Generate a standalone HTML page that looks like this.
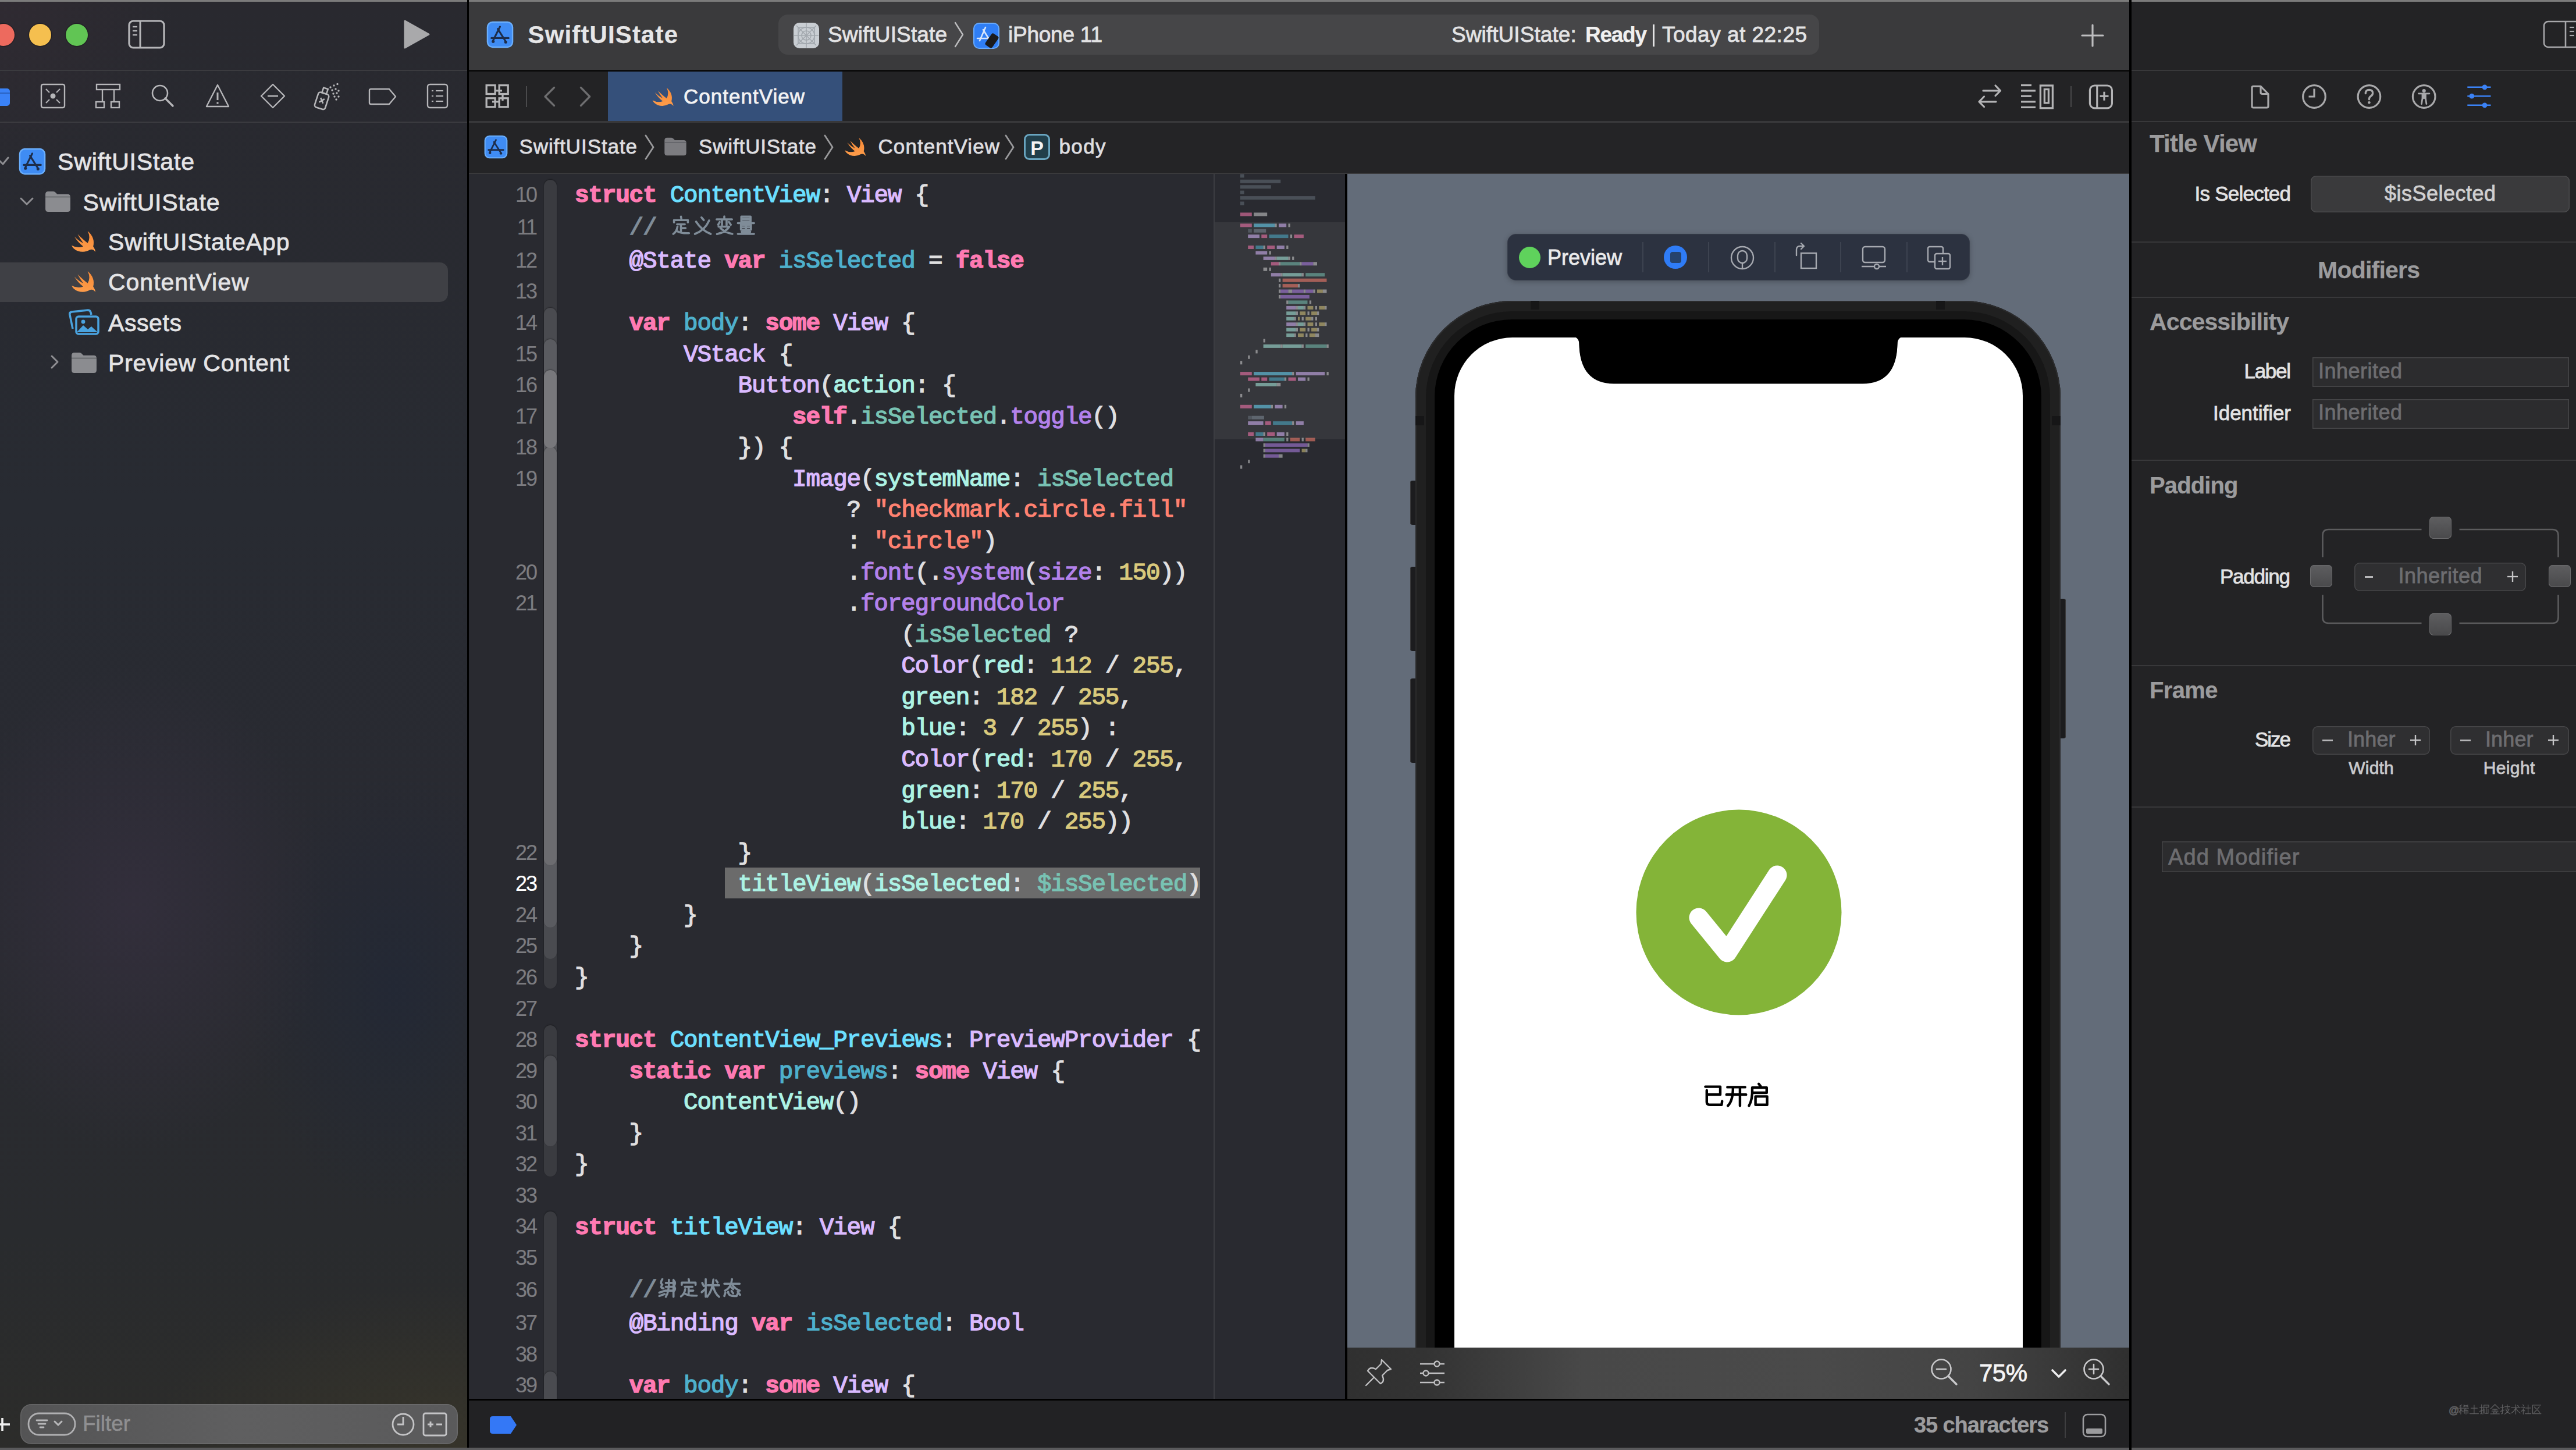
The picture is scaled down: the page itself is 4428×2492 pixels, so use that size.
<!DOCTYPE html><html><head><meta charset="utf-8"><style>html,body{margin:0;padding:0;}body{width:4428px;height:2492px;position:relative;overflow:hidden;background:#232325;font-family:"Liberation Sans",sans-serif;}</style></head><body>
<div style="position:absolute;left:0px;top:0px;width:803px;height:2492px;background:radial-gradient(ellipse 330px 420px at 230px 1560px, rgba(58,50,68,0.55), rgba(58,50,68,0) 100%), radial-gradient(ellipse 260px 380px at 680px 1700px, rgba(28,38,58,0.45), rgba(28,38,58,0) 100%), radial-gradient(ellipse 500px 260px at 760px 2470px, rgba(62,58,42,0.55), rgba(62,58,42,0) 100%), radial-gradient(ellipse 300px 300px at 0px 0px, rgba(60,45,55,0.35), rgba(60,45,55,0) 100%), linear-gradient(180deg,#29292f 0%,#282b32 35%,#292a31 60%,#292b2e 85%,#2c2c2a 100%);"></div>
<div style="position:absolute;left:0px;top:0px;width:4428px;height:3px;background:#7b7b7b;"></div>
<div style="position:absolute;left:0px;top:120px;width:803px;height:2px;background:#3b3b3f;"></div>
<div style="position:absolute;left:0px;top:209px;width:803px;height:2px;background:#3b3b3f;"></div>
<div style="position:absolute;left:0px;top:451px;width:770px;height:68px;background:#3f4045;border-radius:0 14px 14px 0;"></div>
<div style="position:absolute;left:803px;top:0px;width:3px;height:2492px;background:#000;"></div>
<div style="position:absolute;left:806px;top:3px;width:2854px;height:117px;background:#3a3a3c;"></div>
<div style="position:absolute;left:806px;top:120px;width:2854px;height:3px;background:#0b0b0b;"></div>
<div style="position:absolute;left:806px;top:123px;width:2854px;height:85px;background:#232325;"></div>
<div style="position:absolute;left:1045px;top:123px;width:403px;height:85px;background:#35507a;"></div>
<div style="position:absolute;left:806px;top:208px;width:2854px;height:3px;background:#38383a;"></div>
<div style="position:absolute;left:806px;top:211px;width:2854px;height:86px;background:#242426;"></div>
<div style="position:absolute;left:806px;top:297px;width:2854px;height:2px;background:#3a3a3c;"></div>
<div style="position:absolute;left:806px;top:299px;width:1506px;height:2105px;background:#292a30;"></div>
<div style="position:absolute;left:2086px;top:299px;width:2px;height:2105px;background:#3c3d42;"></div>
<div style="position:absolute;left:2088px;top:382px;width:224px;height:373px;background:#36373c;"></div>
<div style="position:absolute;left:2312px;top:299px;width:4px;height:2105px;background:#000;"></div>
<div style="position:absolute;left:2316px;top:299px;width:1344px;height:2017px;background:#636c79;"></div>
<div style="position:absolute;left:2316px;top:2316px;width:1344px;height:88px;background:linear-gradient(90deg,#303030 0%,#333 10%,#484848 30%,#4a4a4a 60%,#444 80%,#2f2f2f 100%);"></div>
<div style="position:absolute;left:806px;top:2404px;width:2854px;height:3px;background:#000;"></div>
<div style="position:absolute;left:806px;top:2407px;width:2854px;height:81px;background:#222224;"></div>
<div style="position:absolute;left:0px;top:2488px;width:4428px;height:4px;background:#5a5a5c;"></div>
<div style="position:absolute;left:3660px;top:0px;width:4px;height:2492px;background:#000;"></div>
<div style="position:absolute;left:3664px;top:3px;width:764px;height:2485px;background:#232325;"></div>
<div style="position:absolute;left:3664px;top:120px;width:764px;height:2px;background:#38383a;"></div>
<div style="position:absolute;left:3664px;top:208px;width:764px;height:2px;background:#38383a;"></div>
<div style="position:absolute;left:935px;top:309px;width:22px;height:1390px;background:#3a3b40;border-radius:11px;box-shadow:0 -1px 2px rgba(0,0,0,0.35);"></div>
<div style="position:absolute;left:935px;top:529px;width:22px;height:1119px;background:#4a4b50;border-radius:11px;box-shadow:0 -1px 2px rgba(0,0,0,0.35);"></div>
<div style="position:absolute;left:935px;top:583px;width:22px;height:1011px;background:#5a5b60;border-radius:11px;box-shadow:0 -1px 2px rgba(0,0,0,0.35);"></div>
<div style="position:absolute;left:935px;top:768px;width:22px;height:719px;background:#6c6c70;border-radius:11px;box-shadow:0 -1px 2px rgba(0,0,0,0.35);"></div>
<div style="position:absolute;left:935px;top:636px;width:22px;height:134px;background:#78787c;border-radius:11px;box-shadow:0 -1px 2px rgba(0,0,0,0.35);"></div>
<div style="position:absolute;left:935px;top:1762px;width:22px;height:260px;background:#3a3b40;border-radius:11px;box-shadow:0 -1px 2px rgba(0,0,0,0.35);"></div>
<div style="position:absolute;left:935px;top:1814px;width:22px;height:156px;background:#4a4b50;border-radius:11px;box-shadow:0 -1px 2px rgba(0,0,0,0.35);"></div>
<div style="position:absolute;left:935px;top:2082px;width:22px;height:322px;background:#3a3b40;border-radius:11px;box-shadow:0 -1px 2px rgba(0,0,0,0.35);"></div>
<div style="position:absolute;left:935px;top:2357px;width:22px;height:73px;background:#4a4b50;border-radius:11px;box-shadow:0 -1px 2px rgba(0,0,0,0.35);"></div>
<div style="position:absolute;left:806px;top:2404px;width:2854px;height:3px;background:#000;"></div>
<div style="position:absolute;left:806px;top:2407px;width:1510px;height:33px;background:#222224;"></div>
<div style="position:absolute;left:1245.5px;top:1491px;width:817.5px;height:52.5px;background:#6b6b6b;"></div>
<div style="position:absolute;left:885.96px;top:316.52px;font-family:'Liberation Sans', sans-serif;font-size:36px;line-height:36px;color:#7c7c80;white-space:pre;letter-spacing:-2.000px;-webkit-text-stroke:0.2px #7c7c80;">10</div>
<div style="position:absolute;left:988.0px;top:315.59px;font-family:'Liberation Mono', monospace;font-size:41px;line-height:41px;white-space:pre;letter-spacing:-1.224px;color:#dfdfe0;-webkit-text-stroke:1.4px currentColor"><span style="color:#ff7ab2;font-weight:bold">struct</span><span style="color:#dfdfe0"> </span><span style="color:#6bdfff">ContentView</span><span style="color:#dfdfe0">: </span><span style="color:#dabaff">View</span><span style="color:#dfdfe0"> {</span></div>
<div style="position:absolute;left:888.63px;top:372.52px;font-family:'Liberation Sans', sans-serif;font-size:36px;line-height:36px;color:#7c7c80;white-space:pre;letter-spacing:-2.000px;-webkit-text-stroke:0.2px #7c7c80;">11</div>
<div style="position:absolute;left:988.0px;top:371.59px;font-family:'Liberation Mono', monospace;font-size:41px;line-height:41px;white-space:pre;letter-spacing:-1.224px;color:#dfdfe0;-webkit-text-stroke:1.4px currentColor"><span style="color:#dfdfe0">    </span><span style="color:#7f8c98">// </span></div>
<svg style="position:absolute;left:1153.7px;top:371.0px;overflow:visible" width="149.0" height="33" viewBox="0 0 451.5 100"><g fill="none" stroke="#7f8c98" stroke-width="11" stroke-linecap="round" stroke-linejoin="round"><path transform="translate(0.0,0)" d="M50,4 L52,14 M14,34 L14,22 L86,22 L86,34 M30,44 L70,44 M50,44 L50,86 M50,64 L74,64 M32,56 Q28,82 10,94 M30,80 Q52,92 92,90"/><path transform="translate(112.9,0)" d="M44,8 L56,22 M84,24 Q62,74 10,94 M16,30 Q46,76 92,94"/><path transform="translate(225.8,0)" d="M50,3 L50,13 M10,18 L90,18 M38,26 L38,48 M62,26 L62,48 M26,32 L18,46 M74,32 L84,46 M20,56 L76,56 Q60,84 12,95 M30,64 Q56,88 92,94"/><path transform="translate(338.6,0)" d="M26,4 L74,4 L74,30 L26,30 Z M26,17 L74,17 M8,38 L92,38 M24,46 L76,46 L76,72 L24,72 Z M24,59 L76,59 M50,46 L50,94 M28,83 L72,83 M8,94 L92,94"/></g></svg>
<div style="position:absolute;left:885.96px;top:429.82px;font-family:'Liberation Sans', sans-serif;font-size:36px;line-height:36px;color:#7c7c80;white-space:pre;letter-spacing:-2.000px;-webkit-text-stroke:0.2px #7c7c80;">12</div>
<div style="position:absolute;left:988.0px;top:428.89px;font-family:'Liberation Mono', monospace;font-size:41px;line-height:41px;white-space:pre;letter-spacing:-1.224px;color:#dfdfe0;-webkit-text-stroke:1.4px currentColor"><span style="color:#dfdfe0">    </span><span style="color:#dabaff">@State</span><span style="color:#dfdfe0"> </span><span style="color:#ff7ab2;font-weight:bold">var</span><span style="color:#dfdfe0"> </span><span style="color:#4eb0cc">isSelected</span><span style="color:#dfdfe0"> = </span><span style="color:#ff7ab2;font-weight:bold">false</span></div>
<div style="position:absolute;left:885.96px;top:483.39px;font-family:'Liberation Sans', sans-serif;font-size:36px;line-height:36px;color:#7c7c80;white-space:pre;letter-spacing:-2.000px;-webkit-text-stroke:0.2px #7c7c80;">13</div>
<div style="position:absolute;left:885.96px;top:536.96px;font-family:'Liberation Sans', sans-serif;font-size:36px;line-height:36px;color:#7c7c80;white-space:pre;letter-spacing:-2.000px;-webkit-text-stroke:0.2px #7c7c80;">14</div>
<div style="position:absolute;left:988.0px;top:536.03px;font-family:'Liberation Mono', monospace;font-size:41px;line-height:41px;white-space:pre;letter-spacing:-1.224px;color:#dfdfe0;-webkit-text-stroke:1.4px currentColor"><span style="color:#dfdfe0">    </span><span style="color:#ff7ab2;font-weight:bold">var</span><span style="color:#dfdfe0"> </span><span style="color:#4eb0cc">body</span><span style="color:#dfdfe0">: </span><span style="color:#ff7ab2;font-weight:bold">some</span><span style="color:#dfdfe0"> </span><span style="color:#dabaff">View</span><span style="color:#dfdfe0"> {</span></div>
<div style="position:absolute;left:885.96px;top:590.53px;font-family:'Liberation Sans', sans-serif;font-size:36px;line-height:36px;color:#7c7c80;white-space:pre;letter-spacing:-2.000px;-webkit-text-stroke:0.2px #7c7c80;">15</div>
<div style="position:absolute;left:988.0px;top:589.60px;font-family:'Liberation Mono', monospace;font-size:41px;line-height:41px;white-space:pre;letter-spacing:-1.224px;color:#dfdfe0;-webkit-text-stroke:1.4px currentColor"><span style="color:#dfdfe0">        </span><span style="color:#dabaff">VStack</span><span style="color:#dfdfe0"> {</span></div>
<div style="position:absolute;left:885.96px;top:644.10px;font-family:'Liberation Sans', sans-serif;font-size:36px;line-height:36px;color:#7c7c80;white-space:pre;letter-spacing:-2.000px;-webkit-text-stroke:0.2px #7c7c80;">16</div>
<div style="position:absolute;left:988.0px;top:643.17px;font-family:'Liberation Mono', monospace;font-size:41px;line-height:41px;white-space:pre;letter-spacing:-1.224px;color:#dfdfe0;-webkit-text-stroke:1.4px currentColor"><span style="color:#dfdfe0">            </span><span style="color:#dabaff">Button</span><span style="color:#dfdfe0">(</span><span style="color:#acf2e4">action</span><span style="color:#dfdfe0">: {</span></div>
<div style="position:absolute;left:885.96px;top:697.67px;font-family:'Liberation Sans', sans-serif;font-size:36px;line-height:36px;color:#7c7c80;white-space:pre;letter-spacing:-2.000px;-webkit-text-stroke:0.2px #7c7c80;">17</div>
<div style="position:absolute;left:988.0px;top:696.74px;font-family:'Liberation Mono', monospace;font-size:41px;line-height:41px;white-space:pre;letter-spacing:-1.224px;color:#dfdfe0;-webkit-text-stroke:1.4px currentColor"><span style="color:#dfdfe0">                </span><span style="color:#ff7ab2;font-weight:bold">self</span><span style="color:#dfdfe0">.</span><span style="color:#78c2b3">isSelected</span><span style="color:#dfdfe0">.</span><span style="color:#b281eb">toggle</span><span style="color:#dfdfe0">()</span></div>
<div style="position:absolute;left:885.96px;top:751.24px;font-family:'Liberation Sans', sans-serif;font-size:36px;line-height:36px;color:#7c7c80;white-space:pre;letter-spacing:-2.000px;-webkit-text-stroke:0.2px #7c7c80;">18</div>
<div style="position:absolute;left:988.0px;top:750.31px;font-family:'Liberation Mono', monospace;font-size:41px;line-height:41px;white-space:pre;letter-spacing:-1.224px;color:#dfdfe0;-webkit-text-stroke:1.4px currentColor"><span style="color:#dfdfe0">            }) {</span></div>
<div style="position:absolute;left:885.96px;top:804.81px;font-family:'Liberation Sans', sans-serif;font-size:36px;line-height:36px;color:#7c7c80;white-space:pre;letter-spacing:-2.000px;-webkit-text-stroke:0.2px #7c7c80;">19</div>
<div style="position:absolute;left:988.0px;top:803.88px;font-family:'Liberation Mono', monospace;font-size:41px;line-height:41px;white-space:pre;letter-spacing:-1.224px;color:#dfdfe0;-webkit-text-stroke:1.4px currentColor"><span style="color:#dfdfe0">                </span><span style="color:#dabaff">Image</span><span style="color:#dfdfe0">(</span><span style="color:#acf2e4">systemName</span><span style="color:#dfdfe0">: </span><span style="color:#78c2b3">isSelected</span></div>
<div style="position:absolute;left:988.0px;top:857.45px;font-family:'Liberation Mono', monospace;font-size:41px;line-height:41px;white-space:pre;letter-spacing:-1.224px;color:#dfdfe0;-webkit-text-stroke:1.4px currentColor"><span style="color:#dfdfe0">                    ? </span><span style="color:#ff8170">&quot;checkmark.circle.fill&quot;</span></div>
<div style="position:absolute;left:988.0px;top:911.02px;font-family:'Liberation Mono', monospace;font-size:41px;line-height:41px;white-space:pre;letter-spacing:-1.224px;color:#dfdfe0;-webkit-text-stroke:1.4px currentColor"><span style="color:#dfdfe0">                    : </span><span style="color:#ff8170">&quot;circle&quot;</span><span style="color:#dfdfe0">)</span></div>
<div style="position:absolute;left:885.96px;top:965.52px;font-family:'Liberation Sans', sans-serif;font-size:36px;line-height:36px;color:#7c7c80;white-space:pre;letter-spacing:-2.000px;-webkit-text-stroke:0.2px #7c7c80;">20</div>
<div style="position:absolute;left:988.0px;top:964.59px;font-family:'Liberation Mono', monospace;font-size:41px;line-height:41px;white-space:pre;letter-spacing:-1.224px;color:#dfdfe0;-webkit-text-stroke:1.4px currentColor"><span style="color:#dfdfe0">                    .</span><span style="color:#b281eb">font</span><span style="color:#dfdfe0">(.</span><span style="color:#b281eb">system</span><span style="color:#dfdfe0">(</span><span style="color:#b281eb">size</span><span style="color:#dfdfe0">: </span><span style="color:#d9c97c">150</span><span style="color:#dfdfe0">))</span></div>
<div style="position:absolute;left:885.96px;top:1019.09px;font-family:'Liberation Sans', sans-serif;font-size:36px;line-height:36px;color:#7c7c80;white-space:pre;letter-spacing:-2.000px;-webkit-text-stroke:0.2px #7c7c80;">21</div>
<div style="position:absolute;left:988.0px;top:1018.16px;font-family:'Liberation Mono', monospace;font-size:41px;line-height:41px;white-space:pre;letter-spacing:-1.224px;color:#dfdfe0;-webkit-text-stroke:1.4px currentColor"><span style="color:#dfdfe0">                    .</span><span style="color:#b281eb">foregroundColor</span></div>
<div style="position:absolute;left:988.0px;top:1071.73px;font-family:'Liberation Mono', monospace;font-size:41px;line-height:41px;white-space:pre;letter-spacing:-1.224px;color:#dfdfe0;-webkit-text-stroke:1.4px currentColor"><span style="color:#dfdfe0">                        (</span><span style="color:#78c2b3">isSelected</span><span style="color:#dfdfe0"> ?</span></div>
<div style="position:absolute;left:988.0px;top:1125.30px;font-family:'Liberation Mono', monospace;font-size:41px;line-height:41px;white-space:pre;letter-spacing:-1.224px;color:#dfdfe0;-webkit-text-stroke:1.4px currentColor"><span style="color:#dfdfe0">                        </span><span style="color:#dabaff">Color</span><span style="color:#dfdfe0">(</span><span style="color:#acf2e4">red</span><span style="color:#dfdfe0">: </span><span style="color:#d9c97c">112</span><span style="color:#dfdfe0"> / </span><span style="color:#d9c97c">255</span><span style="color:#dfdfe0">,</span></div>
<div style="position:absolute;left:988.0px;top:1178.87px;font-family:'Liberation Mono', monospace;font-size:41px;line-height:41px;white-space:pre;letter-spacing:-1.224px;color:#dfdfe0;-webkit-text-stroke:1.4px currentColor"><span style="color:#dfdfe0">                        </span><span style="color:#acf2e4">green</span><span style="color:#dfdfe0">: </span><span style="color:#d9c97c">182</span><span style="color:#dfdfe0"> / </span><span style="color:#d9c97c">255</span><span style="color:#dfdfe0">,</span></div>
<div style="position:absolute;left:988.0px;top:1232.44px;font-family:'Liberation Mono', monospace;font-size:41px;line-height:41px;white-space:pre;letter-spacing:-1.224px;color:#dfdfe0;-webkit-text-stroke:1.4px currentColor"><span style="color:#dfdfe0">                        </span><span style="color:#acf2e4">blue</span><span style="color:#dfdfe0">: </span><span style="color:#d9c97c">3</span><span style="color:#dfdfe0"> / </span><span style="color:#d9c97c">255</span><span style="color:#dfdfe0">) :</span></div>
<div style="position:absolute;left:988.0px;top:1286.01px;font-family:'Liberation Mono', monospace;font-size:41px;line-height:41px;white-space:pre;letter-spacing:-1.224px;color:#dfdfe0;-webkit-text-stroke:1.4px currentColor"><span style="color:#dfdfe0">                        </span><span style="color:#dabaff">Color</span><span style="color:#dfdfe0">(</span><span style="color:#acf2e4">red</span><span style="color:#dfdfe0">: </span><span style="color:#d9c97c">170</span><span style="color:#dfdfe0"> / </span><span style="color:#d9c97c">255</span><span style="color:#dfdfe0">,</span></div>
<div style="position:absolute;left:988.0px;top:1339.58px;font-family:'Liberation Mono', monospace;font-size:41px;line-height:41px;white-space:pre;letter-spacing:-1.224px;color:#dfdfe0;-webkit-text-stroke:1.4px currentColor"><span style="color:#dfdfe0">                        </span><span style="color:#acf2e4">green</span><span style="color:#dfdfe0">: </span><span style="color:#d9c97c">170</span><span style="color:#dfdfe0"> / </span><span style="color:#d9c97c">255</span><span style="color:#dfdfe0">,</span></div>
<div style="position:absolute;left:988.0px;top:1393.15px;font-family:'Liberation Mono', monospace;font-size:41px;line-height:41px;white-space:pre;letter-spacing:-1.224px;color:#dfdfe0;-webkit-text-stroke:1.4px currentColor"><span style="color:#dfdfe0">                        </span><span style="color:#acf2e4">blue</span><span style="color:#dfdfe0">: </span><span style="color:#d9c97c">170</span><span style="color:#dfdfe0"> / </span><span style="color:#d9c97c">255</span><span style="color:#dfdfe0">))</span></div>
<div style="position:absolute;left:885.96px;top:1447.65px;font-family:'Liberation Sans', sans-serif;font-size:36px;line-height:36px;color:#7c7c80;white-space:pre;letter-spacing:-2.000px;-webkit-text-stroke:0.2px #7c7c80;">22</div>
<div style="position:absolute;left:988.0px;top:1446.72px;font-family:'Liberation Mono', monospace;font-size:41px;line-height:41px;white-space:pre;letter-spacing:-1.224px;color:#dfdfe0;-webkit-text-stroke:1.4px currentColor"><span style="color:#dfdfe0">            }</span></div>
<div style="position:absolute;left:885.96px;top:1501.22px;font-family:'Liberation Sans', sans-serif;font-size:36px;line-height:36px;color:#ffffff;white-space:pre;letter-spacing:-2.000px;-webkit-text-stroke:0.2px #ffffff;">23</div>
<div style="position:absolute;left:988.0px;top:1500.29px;font-family:'Liberation Mono', monospace;font-size:41px;line-height:41px;white-space:pre;letter-spacing:-1.224px;color:#dfdfe0;-webkit-text-stroke:1.4px currentColor"><span style="color:#dfdfe0">            </span><span style="color:#acf2e4">titleView</span><span style="color:#dfdfe0">(</span><span style="color:#acf2e4">isSelected</span><span style="color:#dfdfe0">: </span><span style="color:#78c2b3">$isSelected</span><span style="color:#dfdfe0">)</span></div>
<div style="position:absolute;left:885.96px;top:1554.79px;font-family:'Liberation Sans', sans-serif;font-size:36px;line-height:36px;color:#7c7c80;white-space:pre;letter-spacing:-2.000px;-webkit-text-stroke:0.2px #7c7c80;">24</div>
<div style="position:absolute;left:988.0px;top:1553.86px;font-family:'Liberation Mono', monospace;font-size:41px;line-height:41px;white-space:pre;letter-spacing:-1.224px;color:#dfdfe0;-webkit-text-stroke:1.4px currentColor"><span style="color:#dfdfe0">        }</span></div>
<div style="position:absolute;left:885.96px;top:1608.36px;font-family:'Liberation Sans', sans-serif;font-size:36px;line-height:36px;color:#7c7c80;white-space:pre;letter-spacing:-2.000px;-webkit-text-stroke:0.2px #7c7c80;">25</div>
<div style="position:absolute;left:988.0px;top:1607.43px;font-family:'Liberation Mono', monospace;font-size:41px;line-height:41px;white-space:pre;letter-spacing:-1.224px;color:#dfdfe0;-webkit-text-stroke:1.4px currentColor"><span style="color:#dfdfe0">    }</span></div>
<div style="position:absolute;left:885.96px;top:1661.93px;font-family:'Liberation Sans', sans-serif;font-size:36px;line-height:36px;color:#7c7c80;white-space:pre;letter-spacing:-2.000px;-webkit-text-stroke:0.2px #7c7c80;">26</div>
<div style="position:absolute;left:988.0px;top:1661.00px;font-family:'Liberation Mono', monospace;font-size:41px;line-height:41px;white-space:pre;letter-spacing:-1.224px;color:#dfdfe0;-webkit-text-stroke:1.4px currentColor"><span style="color:#dfdfe0">}</span></div>
<div style="position:absolute;left:885.96px;top:1715.50px;font-family:'Liberation Sans', sans-serif;font-size:36px;line-height:36px;color:#7c7c80;white-space:pre;letter-spacing:-2.000px;-webkit-text-stroke:0.2px #7c7c80;">27</div>
<div style="position:absolute;left:885.96px;top:1769.07px;font-family:'Liberation Sans', sans-serif;font-size:36px;line-height:36px;color:#7c7c80;white-space:pre;letter-spacing:-2.000px;-webkit-text-stroke:0.2px #7c7c80;">28</div>
<div style="position:absolute;left:988.0px;top:1768.14px;font-family:'Liberation Mono', monospace;font-size:41px;line-height:41px;white-space:pre;letter-spacing:-1.224px;color:#dfdfe0;-webkit-text-stroke:1.4px currentColor"><span style="color:#ff7ab2;font-weight:bold">struct</span><span style="color:#dfdfe0"> </span><span style="color:#6bdfff">ContentView_Previews</span><span style="color:#dfdfe0">: </span><span style="color:#dabaff">PreviewProvider</span><span style="color:#dfdfe0"> {</span></div>
<div style="position:absolute;left:885.96px;top:1822.64px;font-family:'Liberation Sans', sans-serif;font-size:36px;line-height:36px;color:#7c7c80;white-space:pre;letter-spacing:-2.000px;-webkit-text-stroke:0.2px #7c7c80;">29</div>
<div style="position:absolute;left:988.0px;top:1821.71px;font-family:'Liberation Mono', monospace;font-size:41px;line-height:41px;white-space:pre;letter-spacing:-1.224px;color:#dfdfe0;-webkit-text-stroke:1.4px currentColor"><span style="color:#dfdfe0">    </span><span style="color:#ff7ab2;font-weight:bold">static</span><span style="color:#dfdfe0"> </span><span style="color:#ff7ab2;font-weight:bold">var</span><span style="color:#dfdfe0"> </span><span style="color:#4eb0cc">previews</span><span style="color:#dfdfe0">: </span><span style="color:#ff7ab2;font-weight:bold">some</span><span style="color:#dfdfe0"> </span><span style="color:#dabaff">View</span><span style="color:#dfdfe0"> {</span></div>
<div style="position:absolute;left:885.96px;top:1876.21px;font-family:'Liberation Sans', sans-serif;font-size:36px;line-height:36px;color:#7c7c80;white-space:pre;letter-spacing:-2.000px;-webkit-text-stroke:0.2px #7c7c80;">30</div>
<div style="position:absolute;left:988.0px;top:1875.28px;font-family:'Liberation Mono', monospace;font-size:41px;line-height:41px;white-space:pre;letter-spacing:-1.224px;color:#dfdfe0;-webkit-text-stroke:1.4px currentColor"><span style="color:#dfdfe0">        </span><span style="color:#acf2e4">ContentView</span><span style="color:#dfdfe0">()</span></div>
<div style="position:absolute;left:885.96px;top:1929.78px;font-family:'Liberation Sans', sans-serif;font-size:36px;line-height:36px;color:#7c7c80;white-space:pre;letter-spacing:-2.000px;-webkit-text-stroke:0.2px #7c7c80;">31</div>
<div style="position:absolute;left:988.0px;top:1928.85px;font-family:'Liberation Mono', monospace;font-size:41px;line-height:41px;white-space:pre;letter-spacing:-1.224px;color:#dfdfe0;-webkit-text-stroke:1.4px currentColor"><span style="color:#dfdfe0">    }</span></div>
<div style="position:absolute;left:885.96px;top:1983.35px;font-family:'Liberation Sans', sans-serif;font-size:36px;line-height:36px;color:#7c7c80;white-space:pre;letter-spacing:-2.000px;-webkit-text-stroke:0.2px #7c7c80;">32</div>
<div style="position:absolute;left:988.0px;top:1982.42px;font-family:'Liberation Mono', monospace;font-size:41px;line-height:41px;white-space:pre;letter-spacing:-1.224px;color:#dfdfe0;-webkit-text-stroke:1.4px currentColor"><span style="color:#dfdfe0">}</span></div>
<div style="position:absolute;left:885.96px;top:2036.92px;font-family:'Liberation Sans', sans-serif;font-size:36px;line-height:36px;color:#7c7c80;white-space:pre;letter-spacing:-2.000px;-webkit-text-stroke:0.2px #7c7c80;">33</div>
<div style="position:absolute;left:885.96px;top:2090.49px;font-family:'Liberation Sans', sans-serif;font-size:36px;line-height:36px;color:#7c7c80;white-space:pre;letter-spacing:-2.000px;-webkit-text-stroke:0.2px #7c7c80;">34</div>
<div style="position:absolute;left:988.0px;top:2089.56px;font-family:'Liberation Mono', monospace;font-size:41px;line-height:41px;white-space:pre;letter-spacing:-1.224px;color:#dfdfe0;-webkit-text-stroke:1.4px currentColor"><span style="color:#ff7ab2;font-weight:bold">struct</span><span style="color:#dfdfe0"> </span><span style="color:#6bdfff">titleView</span><span style="color:#dfdfe0">: </span><span style="color:#dabaff">View</span><span style="color:#dfdfe0"> {</span></div>
<div style="position:absolute;left:885.96px;top:2144.06px;font-family:'Liberation Sans', sans-serif;font-size:36px;line-height:36px;color:#7c7c80;white-space:pre;letter-spacing:-2.000px;-webkit-text-stroke:0.2px #7c7c80;">35</div>
<div style="position:absolute;left:885.96px;top:2198.52px;font-family:'Liberation Sans', sans-serif;font-size:36px;line-height:36px;color:#7c7c80;white-space:pre;letter-spacing:-2.000px;-webkit-text-stroke:0.2px #7c7c80;">36</div>
<div style="position:absolute;left:988.0px;top:2197.59px;font-family:'Liberation Mono', monospace;font-size:41px;line-height:41px;white-space:pre;letter-spacing:-1.224px;color:#dfdfe0;-webkit-text-stroke:1.4px currentColor"><span style="color:#dfdfe0">    </span><span style="color:#7f8c98">//</span></div>
<svg style="position:absolute;left:1130.3px;top:2197.0px;overflow:visible" width="149.0" height="33" viewBox="0 0 451.5 100"><g fill="none" stroke="#7f8c98" stroke-width="11" stroke-linecap="round" stroke-linejoin="round"><path transform="translate(0.0,0)" d="M26,4 Q12,26 26,32 Q12,50 32,52 M10,74 L36,66 M10,92 L38,82 M44,24 L76,24 M44,44 L76,44 M40,64 L78,64 M60,8 Q62,70 44,96 M84,8 L84,96 M84,10 Q98,22 86,40 Q98,56 86,66"/><path transform="translate(112.9,0)" d="M50,4 L52,14 M14,34 L14,22 L86,22 L86,34 M30,44 L70,44 M50,44 L50,86 M50,64 L74,64 M32,56 Q28,82 10,94 M30,80 Q52,92 92,90"/><path transform="translate(225.8,0)" d="M26,4 L26,96 M8,24 L16,40 M5,72 L24,56 M36,36 L96,36 M66,6 Q62,62 34,96 M66,46 Q76,82 96,96 M80,10 L88,22"/><path transform="translate(338.6,0)" d="M10,28 L90,28 M50,4 Q46,48 14,64 M52,34 Q66,54 90,64 M46,46 L56,56 M16,74 L10,92 M30,70 Q30,96 74,92 L80,80 M48,66 L56,78 M80,70 L92,86"/></g></svg>
<div style="position:absolute;left:885.96px;top:2255.52px;font-family:'Liberation Sans', sans-serif;font-size:36px;line-height:36px;color:#7c7c80;white-space:pre;letter-spacing:-2.000px;-webkit-text-stroke:0.2px #7c7c80;">37</div>
<div style="position:absolute;left:988.0px;top:2254.59px;font-family:'Liberation Mono', monospace;font-size:41px;line-height:41px;white-space:pre;letter-spacing:-1.224px;color:#dfdfe0;-webkit-text-stroke:1.4px currentColor"><span style="color:#dfdfe0">    </span><span style="color:#dabaff">@Binding</span><span style="color:#dfdfe0"> </span><span style="color:#ff7ab2;font-weight:bold">var</span><span style="color:#dfdfe0"> </span><span style="color:#4eb0cc">isSelected</span><span style="color:#dfdfe0">: </span><span style="color:#dabaff">Bool</span></div>
<div style="position:absolute;left:885.96px;top:2309.52px;font-family:'Liberation Sans', sans-serif;font-size:36px;line-height:36px;color:#7c7c80;white-space:pre;letter-spacing:-2.000px;-webkit-text-stroke:0.2px #7c7c80;">38</div>
<div style="position:absolute;left:885.96px;top:2363.02px;font-family:'Liberation Sans', sans-serif;font-size:36px;line-height:36px;color:#7c7c80;white-space:pre;letter-spacing:-2.000px;-webkit-text-stroke:0.2px #7c7c80;">39</div>
<div style="position:absolute;left:988.0px;top:2362.09px;font-family:'Liberation Mono', monospace;font-size:41px;line-height:41px;white-space:pre;letter-spacing:-1.224px;color:#dfdfe0;-webkit-text-stroke:1.4px currentColor"><span style="color:#dfdfe0">    </span><span style="color:#ff7ab2;font-weight:bold">var</span><span style="color:#dfdfe0"> </span><span style="color:#4eb0cc">body</span><span style="color:#dfdfe0">: </span><span style="color:#ff7ab2;font-weight:bold">some</span><span style="color:#dfdfe0"> </span><span style="color:#dabaff">View</span><span style="color:#dfdfe0"> {</span></div>
<div style="position:absolute;left:-13px;top:41px;width:38px;height:38px;border-radius:50%;background:#ed6a5e;box-shadow:0 0 0 1.5px rgba(0,0,0,0.25);"></div>
<div style="position:absolute;left:50px;top:41px;width:38px;height:38px;border-radius:50%;background:#f5bf4f;box-shadow:0 0 0 1.5px rgba(0,0,0,0.25);"></div>
<div style="position:absolute;left:113px;top:41px;width:38px;height:38px;border-radius:50%;background:#61c554;box-shadow:0 0 0 1.5px rgba(0,0,0,0.25);"></div>
<svg style="position:absolute;left:218px;top:32px;" width="68" height="54" viewBox="0 0 68 54"><rect x="4" y="4" width="60" height="46" rx="7" fill="none" stroke="#b6b6b9" stroke-width="3.2"/><line x1="23" y1="4" x2="23" y2="50" stroke="#b6b6b9" stroke-width="3"/><g stroke="#b6b6b9" stroke-width="2.4"><line x1="10" y1="14" x2="18" y2="14"/><line x1="10" y1="21" x2="18" y2="21"/><line x1="10" y1="28" x2="18" y2="28"/></g></svg>
<svg style="position:absolute;left:690px;top:32px;" width="52" height="54" viewBox="0 0 52 54"><path d="M6,4 L47,27 L6,50 Z" fill="#a9a9ab" stroke="#a9a9ab" stroke-width="3" stroke-linejoin="round"/></svg>
<svg style="position:absolute;left:0px;top:150px;" width="20" height="34" viewBox="0 0 20 34"><rect x="-10" y="2" width="27" height="30" rx="5" fill="#3a82f7"/><rect x="-10" y="9" width="27" height="2" fill="#2a62c0"/></svg>
<svg style="position:absolute;left:68px;top:142px;" width="46" height="46" viewBox="0 0 46 46"><rect x="3" y="3" width="40" height="40" rx="3" fill="none" stroke="#b6b6b9" stroke-width="2.4"/><circle cx="23" cy="23" r="4.5" fill="#b6b6b9"/><g stroke="#b6b6b9" stroke-width="2.2"><line x1="11" y1="11" x2="17" y2="17"/><line x1="35" y1="11" x2="29" y2="17"/><line x1="11" y1="35" x2="17" y2="29"/><line x1="35" y1="35" x2="29" y2="29"/></g></svg>
<svg style="position:absolute;left:163px;top:142px;" width="46" height="46" viewBox="0 0 46 46"><g fill="none" stroke="#b6b6b9" stroke-width="2.4"><rect x="3" y="3" width="40" height="9"/><line x1="13" y1="12" x2="13" y2="33"/><line x1="33" y1="12" x2="33" y2="33"/><rect x="2" y="33" width="14" height="10"/><rect x="28" y="33" width="14" height="10"/></g></svg>
<svg style="position:absolute;left:258px;top:143px;" width="44" height="44" viewBox="0 0 44 44"><g fill="none" stroke="#b6b6b9" stroke-width="2.6"><circle cx="17" cy="17" r="13"/><line x1="26" y1="26" x2="39" y2="39" stroke-width="3.4" stroke-linecap="round"/></g></svg>
<svg style="position:absolute;left:353px;top:143px;" width="44" height="44" viewBox="0 0 44 44"><g fill="none" stroke="#b6b6b9" stroke-width="2.4" stroke-linejoin="round"><path d="M21,3 L40,40 L2,40 Z"/></g><line x1="21" y1="16" x2="21" y2="29" stroke="#b6b6b9" stroke-width="3"/><circle cx="21" cy="34" r="1.8" fill="#b6b6b9"/></svg>
<svg style="position:absolute;left:446px;top:142px;" width="46" height="46" viewBox="0 0 46 46"><g fill="none" stroke="#b6b6b9" stroke-width="2.4" stroke-linejoin="round"><path d="M23,3 L43,23 L23,43 L3,23 Z"/><line x1="14" y1="23" x2="32" y2="23" stroke-width="2.6"/></g></svg>
<svg style="position:absolute;left:538px;top:142px;" width="52" height="50" viewBox="0 0 52 50"><g transform="rotate(18 16 30)" fill="none" stroke="#b6b6b9" stroke-width="2.6"><rect x="6" y="18" width="19" height="27" rx="4"/><rect x="11.5" y="9" width="8" height="9"/><path d="M12,27 L19,35 M19,27 L12,35"/></g><g fill="#b6b6b9"><circle cx="30" cy="8" r="1.7"/><circle cx="36" cy="5" r="1.7"/><circle cx="42" cy="2.5" r="1.7"/><circle cx="33" cy="13" r="1.7"/><circle cx="39" cy="11" r="1.7"/><circle cx="44" cy="14" r="1.7"/><circle cx="35" cy="19" r="1.7"/><circle cx="41" cy="18" r="1.7"/><circle cx="37" cy="24" r="1.7"/><circle cx="44" cy="24" r="1.7"/><circle cx="40" cy="29" r="1.7"/></g></svg>
<svg style="position:absolute;left:632px;top:150px;" width="52" height="32" viewBox="0 0 52 32"><path d="M3,5 Q3,3 6,3 L37,3 L48,16 L37,29 L6,29 Q3,29 3,27 Z" fill="none" stroke="#b6b6b9" stroke-width="2.4" stroke-linejoin="round"/></svg>
<svg style="position:absolute;left:732px;top:142px;" width="40" height="46" viewBox="0 0 40 46"><rect x="3" y="3" width="34" height="40" rx="4" fill="none" stroke="#b6b6b9" stroke-width="2.4"/><g stroke="#b6b6b9" stroke-width="2.2"><line x1="10" y1="14" x2="13" y2="14"/><line x1="17" y1="14" x2="30" y2="14"/><line x1="10" y1="23" x2="13" y2="23"/><line x1="17" y1="23" x2="30" y2="23"/><line x1="10" y1="32" x2="13" y2="32"/><line x1="17" y1="32" x2="30" y2="32"/></g></svg>
<svg style="position:absolute;left:0px;top:268px;" width="16" height="20" viewBox="0 0 16 20"><path d="M-3,6 L5,14 L14,3" fill="none" stroke="#8e8e92" stroke-width="3" stroke-linecap="round" stroke-linejoin="round"/></svg>
<svg style="position:absolute;left:32px;top:254px;" width="47" height="47" viewBox="0 0 48 48"><rect x="2" y="2" width="44" height="44" rx="9" fill="#3f8cf4" stroke="#6aaefc" stroke-width="2.5"/><g stroke="#1d2d4a" stroke-width="3.2" stroke-linecap="round" fill="none"><line x1="24" y1="10" x2="12" y2="34"/><line x1="20" y1="14" x2="34" y2="36"/><line x1="9" y1="30" x2="39" y2="30"/></g><circle cx="12" cy="36" r="2.6" fill="#1d2d4a"/><circle cx="34" cy="37" r="2.6" fill="#1d2d4a"/></svg>
<div style="position:absolute;left:99.00px;top:257.79px;font-family:'Liberation Sans', sans-serif;font-size:41px;line-height:41px;color:#e4e4e6;white-space:pre;letter-spacing:0.857px;-webkit-text-stroke:0.8px #e4e4e6;">SwiftUIState</div>
<svg style="position:absolute;left:33px;top:337px;" width="28" height="20" viewBox="0 0 28 20"><path d="M3,4 L13,14 L23,4" fill="none" stroke="#8e8e92" stroke-width="3" stroke-linecap="round" stroke-linejoin="round"/></svg>
<svg style="position:absolute;left:76px;top:327px;" width="47" height="39" viewBox="0 0 48 40"><path d="M2,7 Q2,2 7,2 L16,2 Q19,2 21,5 L23,7 L41,7 Q46,7 46,12 L46,33 Q46,38 41,38 L7,38 Q2,38 2,33 Z" fill="#8b8c90"/><rect x="2" y="11" width="44" height="1.6" fill="#5d5e62"/></svg>
<div style="position:absolute;left:142.50px;top:327.79px;font-family:'Liberation Sans', sans-serif;font-size:41px;line-height:41px;color:#e4e4e6;white-space:pre;letter-spacing:0.857px;-webkit-text-stroke:0.8px #e4e4e6;">SwiftUIState</div>
<svg style="position:absolute;left:121px;top:395px;" width="46" height="40" viewBox="0 0 46 42"><defs><linearGradient id="sg1" x1="0" y1="0" x2="0" y2="1"><stop offset="0" stop-color="#f88a36"/><stop offset="1" stop-color="#fd9c4a"/></linearGradient></defs><path d="M30,2 Q44,14 40,30 Q44,36 44,40 Q40,34 34,36 Q24,42 12,38 Q4,35 1,28 Q12,34 22,30 Q12,22 6,12 Q14,20 22,24 Q16,16 12,8 Q22,18 30,24 Q36,14 30,2 Z" fill="url(#sg1)"/></svg>
<div style="position:absolute;left:186.00px;top:396.29px;font-family:'Liberation Sans', sans-serif;font-size:41px;line-height:41px;color:#e4e4e6;white-space:pre;letter-spacing:0.927px;-webkit-text-stroke:0.8px #e4e4e6;">SwiftUIStateApp</div>
<svg style="position:absolute;left:121px;top:464px;" width="46" height="40" viewBox="0 0 46 42"><defs><linearGradient id="sg2" x1="0" y1="0" x2="0" y2="1"><stop offset="0" stop-color="#f88a36"/><stop offset="1" stop-color="#fd9c4a"/></linearGradient></defs><path d="M30,2 Q44,14 40,30 Q44,36 44,40 Q40,34 34,36 Q24,42 12,38 Q4,35 1,28 Q12,34 22,30 Q12,22 6,12 Q14,20 22,24 Q16,16 12,8 Q22,18 30,24 Q36,14 30,2 Z" fill="url(#sg2)"/></svg>
<div style="position:absolute;left:186.00px;top:465.29px;font-family:'Liberation Sans', sans-serif;font-size:41px;line-height:41px;color:#e4e4e6;white-space:pre;letter-spacing:0.979px;-webkit-text-stroke:0.8px #e4e4e6;">ContentView</div>
<svg style="position:absolute;left:117px;top:531px;" width="55" height="46" viewBox="0 0 55 46"><g fill="none" stroke="#4aa3df" stroke-width="3.5" stroke-linejoin="round"><path d="M8,34 L3,10 Q2,6 6,5 L34,2 Q38,2 39,6 L40,10"/></g><rect x="14" y="13" width="38" height="30" rx="4" fill="none" stroke="#4aa3df" stroke-width="3.5"/><path d="M15,40 L26,28 L34,35 L40,30 L51,40 Z" fill="#4aa3df"/><circle cx="26" cy="22" r="3.4" fill="#4aa3df"/></svg>
<div style="position:absolute;left:186.00px;top:535.29px;font-family:'Liberation Sans', sans-serif;font-size:41px;line-height:41px;color:#e4e4e6;white-space:pre;letter-spacing:0.592px;-webkit-text-stroke:0.8px #e4e4e6;">Assets</div>
<svg style="position:absolute;left:84px;top:608px;" width="22" height="30" viewBox="0 0 22 30"><path d="M5,4 L15,14 L5,24" fill="none" stroke="#8e8e92" stroke-width="3" stroke-linecap="round" stroke-linejoin="round"/></svg>
<svg style="position:absolute;left:121px;top:604px;" width="47" height="39" viewBox="0 0 48 40"><path d="M2,7 Q2,2 7,2 L16,2 Q19,2 21,5 L23,7 L41,7 Q46,7 46,12 L46,33 Q46,38 41,38 L7,38 Q2,38 2,33 Z" fill="#8b8c90"/><rect x="2" y="11" width="44" height="1.6" fill="#5d5e62"/></svg>
<div style="position:absolute;left:186.00px;top:604.29px;font-family:'Liberation Sans', sans-serif;font-size:41px;line-height:41px;color:#e4e4e6;white-space:pre;letter-spacing:0.764px;-webkit-text-stroke:0.8px #e4e4e6;">Preview Content</div>
<div style="position:absolute;left:35px;top:2413px;width:752px;height:69px;background:linear-gradient(90deg,#545455,#5f5f60 50%,#5a5a5b);border-radius:19px;box-shadow:inset 0 0 0 1.5px rgba(255,255,255,0.10);"></div>
<svg style="position:absolute;left:47px;top:2427px;" width="85" height="42" viewBox="0 0 85 42"><rect x="2" y="2" width="80" height="37" rx="18" fill="none" stroke="#b0b0b2" stroke-width="2.8"/><g stroke="#b8b8ba" stroke-width="2.8" stroke-linecap="round"><line x1="16" y1="14" x2="34" y2="14"/><line x1="19" y1="20" x2="31" y2="20"/><line x1="22" y1="26" x2="28" y2="26"/></g><path d="M47,16 L53,22 L59,16" fill="none" stroke="#b8b8ba" stroke-width="3" stroke-linecap="round" stroke-linejoin="round"/></svg>
<div style="position:absolute;left:142.00px;top:2428.17px;font-family:'Liberation Sans', sans-serif;font-size:37px;line-height:37px;color:#8f8f91;white-space:pre;letter-spacing:-0.043px;-webkit-text-stroke:0.5px #8f8f91;">Filter</div>
<svg style="position:absolute;left:672px;top:2427px;" width="42" height="42" viewBox="0 0 42 42"><circle cx="21" cy="21" r="18" fill="none" stroke="#c4c4c6" stroke-width="2.8"/><path d="M21,8 L21,21 L11,21" fill="none" stroke="#c4c4c6" stroke-width="2.8"/></svg>
<svg style="position:absolute;left:726px;top:2427px;" width="43" height="42" viewBox="0 0 43 42"><rect x="2" y="2" width="39" height="38" rx="3" fill="none" stroke="#c4c4c6" stroke-width="2.8"/><g stroke="#c4c4c6" stroke-width="3"><line x1="9" y1="21" x2="19" y2="21"/><line x1="14" y1="16" x2="14" y2="26"/><line x1="24" y1="21" x2="34" y2="21"/></g></svg>
<svg style="position:absolute;left:0px;top:2436px;" width="18" height="24" viewBox="0 0 18 24"><g stroke="#f0f0f0" stroke-width="3.6"><line x1="0" y1="12" x2="17" y2="12"/><line x1="4" y1="1" x2="4" y2="23"/></g></svg>
<svg style="position:absolute;left:836px;top:36px;" width="47" height="47" viewBox="0 0 48 48"><rect x="2" y="2" width="44" height="44" rx="9" fill="#3f8cf4" stroke="#6aaefc" stroke-width="2.5"/><g stroke="#1d2d4a" stroke-width="3.2" stroke-linecap="round" fill="none"><line x1="24" y1="10" x2="12" y2="34"/><line x1="20" y1="14" x2="34" y2="36"/><line x1="9" y1="30" x2="39" y2="30"/></g><circle cx="12" cy="36" r="2.6" fill="#1d2d4a"/><circle cx="34" cy="37" r="2.6" fill="#1d2d4a"/></svg>
<div style="position:absolute;left:907.50px;top:39.44px;font-family:'Liberation Sans', sans-serif;font-size:42px;line-height:42px;color:#e6e6e7;white-space:pre;font-weight:bold;letter-spacing:1.135px;-webkit-text-stroke:0.25px #e6e6e7;">SwiftUIState</div>
<div style="position:absolute;left:1338px;top:25px;width:1789px;height:69px;background:#464648;border-radius:16px;"></div>
<svg style="position:absolute;left:1363px;top:38px;" width="46" height="46" viewBox="0 0 46 46"><rect x="1" y="1" width="44" height="44" rx="10" fill="#c9ced3"/><g fill="none" stroke="#a2a8ae" stroke-width="1.6"><circle cx="23" cy="23" r="14"/><circle cx="23" cy="23" r="8"/><line x1="6" y1="6" x2="40" y2="40"/><line x1="40" y1="6" x2="6" y2="40"/><line x1="23" y1="2" x2="23" y2="44"/><line x1="2" y1="23" x2="44" y2="23"/><rect x="9" y="9" width="28" height="28"/></g></svg>
<div style="position:absolute;left:1423.00px;top:41.17px;font-family:'Liberation Sans', sans-serif;font-size:37px;line-height:37px;color:#e3e3e4;white-space:pre;letter-spacing:0.130px;-webkit-text-stroke:0.8px #e3e3e4;">SwiftUIState</div>
<svg style="position:absolute;left:1638px;top:36px;" width="22" height="48" viewBox="0 0 22 48"><path d="M4,3 L17,23.5 L4,44" fill="none" stroke="#bdbdbf" stroke-width="2.4" stroke-linecap="round" stroke-linejoin="round"/></svg>
<svg style="position:absolute;left:1672px;top:38px;" width="47" height="47" viewBox="0 0 47 47"><rect x="2" y="2" width="43" height="43" rx="9" fill="#2f7ef5" stroke="#67a9fb" stroke-width="2"/><g stroke="#d7e6fb" stroke-width="2.6" stroke-linecap="round" fill="none"><line x1="22" y1="9" x2="12" y2="32"/><line x1="18" y1="13" x2="31" y2="34"/><line x1="8" y1="28" x2="38" y2="28"/></g><rect x="26" y="20" width="14" height="24" rx="3" transform="rotate(35 33 32)" fill="#1b1b1d"/></svg>
<div style="position:absolute;left:1733.00px;top:41.17px;font-family:'Liberation Sans', sans-serif;font-size:37px;line-height:37px;color:#e3e3e4;white-space:pre;letter-spacing:-0.236px;-webkit-text-stroke:0.8px #e3e3e4;">iPhone 11</div>
<div style="position:absolute;left:2495.00px;top:41.17px;font-family:'Liberation Sans', sans-serif;font-size:37px;line-height:37px;color:#e3e3e4;white-space:pre;letter-spacing:0.067px;-webkit-text-stroke:0.8px #e3e3e4;">SwiftUIState: </div>
<div style="position:absolute;left:2725.00px;top:41.17px;font-family:'Liberation Sans', sans-serif;font-size:37px;line-height:37px;color:#f0f0f0;white-space:pre;font-weight:bold;letter-spacing:-1.262px;-webkit-text-stroke:0.25px #f0f0f0;">Ready</div>
<div style="position:absolute;left:2841px;top:42px;width:3px;height:38px;background:#e3e3e4;"></div>
<div style="position:absolute;left:2857.00px;top:41.17px;font-family:'Liberation Sans', sans-serif;font-size:37px;line-height:37px;color:#e3e3e4;white-space:pre;letter-spacing:0.483px;-webkit-text-stroke:0.8px #e3e3e4;">Today at 22:25</div>
<svg style="position:absolute;left:3576px;top:40px;" width="42" height="42" viewBox="0 0 42 42"><g stroke="#bdbdbf" stroke-width="3.2" stroke-linecap="round"><line x1="21" y1="3" x2="21" y2="39"/><line x1="3" y1="21" x2="39" y2="21"/></g></svg>
<svg style="position:absolute;left:4370px;top:34px;" width="60" height="50" viewBox="0 0 60 50"><rect x="3" y="3" width="70" height="44" rx="7" fill="none" stroke="#a7a7aa" stroke-width="2.6"/><line x1="40" y1="3" x2="40" y2="47" stroke="#a7a7aa" stroke-width="2.6"/><g stroke="#a7a7aa" stroke-width="2.2"><line x1="47" y1="13" x2="55" y2="13"/><line x1="47" y1="20" x2="55" y2="20"/><line x1="47" y1="27" x2="55" y2="27"/></g></svg>
<svg style="position:absolute;left:832px;top:142px;" width="46" height="46" viewBox="0 0 46 46"><g fill="none" stroke="#b4b4b6" stroke-width="3.3"><rect x="4.2" y="4.6" width="14.9" height="14.9"/><rect x="26.2" y="4.6" width="15" height="14.9"/><rect x="4.2" y="26.8" width="14.9" height="15"/><rect x="26.2" y="26.8" width="15" height="15"/><line x1="19" y1="13.8" x2="31" y2="13.8"/><line x1="32" y1="19" x2="32" y2="31"/><line x1="14" y1="32.8" x2="26" y2="32.8"/></g></svg>
<div style="position:absolute;left:904px;top:148px;width:2px;height:36px;background:#4a4a4c;"></div>
<svg style="position:absolute;left:932px;top:146px;" width="26" height="40" viewBox="0 0 26 40"><path d="M20.5,4.5 L5,20 L20.5,35.5" fill="none" stroke="#6e6e70" stroke-width="3.3" stroke-linecap="round" stroke-linejoin="round"/></svg>
<svg style="position:absolute;left:994px;top:146px;" width="26" height="40" viewBox="0 0 26 40"><path d="M4.5,4.5 L19.7,20 L4.5,35.5" fill="none" stroke="#6e6e70" stroke-width="3.3" stroke-linecap="round" stroke-linejoin="round"/></svg>
<svg style="position:absolute;left:1120px;top:149px;" width="40" height="35" viewBox="0 0 46 42"><defs><linearGradient id="sg3" x1="0" y1="0" x2="0" y2="1"><stop offset="0" stop-color="#f88a36"/><stop offset="1" stop-color="#fd9c4a"/></linearGradient></defs><path d="M30,2 Q44,14 40,30 Q44,36 44,40 Q40,34 34,36 Q24,42 12,38 Q4,35 1,28 Q12,34 22,30 Q12,22 6,12 Q14,20 22,24 Q16,16 12,8 Q22,18 30,24 Q36,14 30,2 Z" fill="url(#sg3)"/></svg>
<div style="position:absolute;left:1175.00px;top:147.87px;font-family:'Liberation Sans', sans-serif;font-size:35px;line-height:35px;color:#f2f2f3;white-space:pre;letter-spacing:1.020px;-webkit-text-stroke:0.8px #f2f2f3;">ContentView</div>
<svg style="position:absolute;left:3398px;top:143px;" width="46" height="46" viewBox="0 0 46 46"><g fill="none" stroke="#b4b4b6" stroke-width="3.2" stroke-linecap="round" stroke-linejoin="round"><path d="M11,12.9 L40.5,12.9 M32,4 L40.5,12.9 L32,21.5"/><path d="M33,31.8 L4,31.8 M12.5,23 L4,31.8 L12.5,40.5"/></g></svg>
<svg style="position:absolute;left:3470px;top:143px;" width="64" height="46" viewBox="0 0 64 46"><g stroke="#b4b4b6" stroke-width="3.3"><line x1="4" y1="3.5" x2="22" y2="3.5"/><line x1="4" y1="12.9" x2="29" y2="12.9"/><line x1="4" y1="22.2" x2="22" y2="22.2"/><line x1="4" y1="31.8" x2="29" y2="31.8"/><line x1="4" y1="41.4" x2="29" y2="41.4"/></g><g fill="none" stroke="#b4b4b6" stroke-width="3.3"><rect x="37.4" y="4" width="21" height="38.8"/><rect x="44.4" y="10.5" width="7" height="23.4"/></g></svg>
<div style="position:absolute;left:3559px;top:148px;width:2px;height:36px;background:#48484a;"></div>
<svg style="position:absolute;left:3588px;top:143px;" width="46" height="46" viewBox="0 0 46 46"><g fill="none" stroke="#b4b4b6" stroke-width="3.2"><rect x="4.4" y="4" width="38" height="38.8" rx="8"/><line x1="16.8" y1="4" x2="16.8" y2="42.8"/><line x1="21.5" y1="22.2" x2="36.5" y2="22.2"/><line x1="29" y1="14.7" x2="29" y2="29.7"/></g></svg>
<svg style="position:absolute;left:832px;top:232px;" width="41" height="41" viewBox="0 0 48 48"><rect x="2" y="2" width="44" height="44" rx="9" fill="#3f8cf4" stroke="#6aaefc" stroke-width="2.5"/><g stroke="#1d2d4a" stroke-width="3.2" stroke-linecap="round" fill="none"><line x1="24" y1="10" x2="12" y2="34"/><line x1="20" y1="14" x2="34" y2="36"/><line x1="9" y1="30" x2="39" y2="30"/></g><circle cx="12" cy="36" r="2.6" fill="#1d2d4a"/><circle cx="34" cy="37" r="2.6" fill="#1d2d4a"/></svg>
<div style="position:absolute;left:892.50px;top:234.37px;font-family:'Liberation Sans', sans-serif;font-size:35px;line-height:35px;color:#dedee0;white-space:pre;letter-spacing:0.903px;-webkit-text-stroke:0.8px #dedee0;">SwiftUIState</div>
<svg style="position:absolute;left:1107px;top:230px;" width="20" height="46" viewBox="0 0 20 46"><path d="M3,3 L16,23 L3,43" fill="none" stroke="#9a9a9c" stroke-width="2.8" stroke-linecap="round" stroke-linejoin="round"/></svg>
<svg style="position:absolute;left:1140px;top:235px;" width="42" height="34" viewBox="0 0 48 40"><path d="M2,7 Q2,2 7,2 L16,2 Q19,2 21,5 L23,7 L41,7 Q46,7 46,12 L46,33 Q46,38 41,38 L7,38 Q2,38 2,33 Z" fill="#7c7c80"/><rect x="2" y="11" width="44" height="1.6" fill="#5d5e62"/></svg>
<div style="position:absolute;left:1201.00px;top:234.37px;font-family:'Liberation Sans', sans-serif;font-size:35px;line-height:35px;color:#dedee0;white-space:pre;letter-spacing:0.858px;-webkit-text-stroke:0.8px #dedee0;">SwiftUIState</div>
<svg style="position:absolute;left:1415px;top:230px;" width="20" height="46" viewBox="0 0 20 46"><path d="M3,3 L16,23 L3,43" fill="none" stroke="#9a9a9c" stroke-width="2.8" stroke-linecap="round" stroke-linejoin="round"/></svg>
<svg style="position:absolute;left:1450px;top:235px;" width="41" height="35" viewBox="0 0 46 42"><defs><linearGradient id="sg4" x1="0" y1="0" x2="0" y2="1"><stop offset="0" stop-color="#f88a36"/><stop offset="1" stop-color="#fd9c4a"/></linearGradient></defs><path d="M30,2 Q44,14 40,30 Q44,36 44,40 Q40,34 34,36 Q24,42 12,38 Q4,35 1,28 Q12,34 22,30 Q12,22 6,12 Q14,20 22,24 Q16,16 12,8 Q22,18 30,24 Q36,14 30,2 Z" fill="url(#sg4)"/></svg>
<div style="position:absolute;left:1509.50px;top:234.37px;font-family:'Liberation Sans', sans-serif;font-size:35px;line-height:35px;color:#dedee0;white-space:pre;letter-spacing:1.070px;-webkit-text-stroke:0.8px #dedee0;">ContentView</div>
<svg style="position:absolute;left:1726px;top:230px;" width="20" height="46" viewBox="0 0 20 46"><path d="M3,3 L16,23 L3,43" fill="none" stroke="#9a9a9c" stroke-width="2.8" stroke-linecap="round" stroke-linejoin="round"/></svg>
<svg style="position:absolute;left:1759px;top:229px;" width="47" height="47" viewBox="0 0 47 47"><rect x="2.5" y="2.5" width="42" height="42" rx="8" fill="#213f4b" stroke="#69a5c0" stroke-width="3"/><text x="23.5" y="37" text-anchor="middle" font-family="Liberation Sans" font-weight="bold" font-size="34" fill="#f4f4f4">P</text></svg>
<div style="position:absolute;left:1820.50px;top:234.37px;font-family:'Liberation Sans', sans-serif;font-size:35px;line-height:35px;color:#dedee0;white-space:pre;letter-spacing:1.370px;-webkit-text-stroke:0.8px #dedee0;">body</div>
<svg style="position:absolute;left:3864px;top:144px;" width="42" height="46" viewBox="0 0 42 46"><g fill="none" stroke="#a9a9ab" stroke-width="3.2" stroke-linejoin="round"><path d="M9.5,4.3 L22,4.3 L35,17.5 L35,38.5 Q35,41 32.5,41 L9.5,41 Q7,41 7,38.5 L7,6.8 Q7,4.3 9.5,4.3 Z"/><path d="M22,4.3 L22,14.5 Q22,17.5 25,17.5 L35,17.5"/></g></svg>
<svg style="position:absolute;left:3955px;top:144px;" width="46" height="46" viewBox="0 0 46 46"><circle cx="23" cy="22" r="19.3" fill="none" stroke="#a9a9ab" stroke-width="3.2"/><path d="M23,8.5 L23,22 L13.5,22" fill="none" stroke="#a9a9ab" stroke-width="3.2"/></svg>
<svg style="position:absolute;left:4050px;top:144px;" width="46" height="46" viewBox="0 0 46 46"><circle cx="22.4" cy="22" r="19.3" fill="none" stroke="#a9a9ab" stroke-width="3.2"/><path d="M16.3,16.5 Q16.3,10.3 22.4,10.3 Q28.6,10.3 28.6,16 Q28.6,19.5 25,21.5 Q22.4,23 22.4,26.8" fill="none" stroke="#a9a9ab" stroke-width="3.3" stroke-linecap="round"/><circle cx="22.4" cy="32.2" r="2.3" fill="#a9a9ab"/></svg>
<svg style="position:absolute;left:4144px;top:144px;" width="46" height="46" viewBox="0 0 46 46"><circle cx="22.7" cy="22" r="19.3" fill="none" stroke="#a9a9ab" stroke-width="3.2"/><circle cx="22.7" cy="12" r="3.1" fill="#a9a9ab"/><path d="M13.5,16.8 L31.9,16.8 M22.7,17 L22.7,25 M20,17.5 L20,25 L18.5,34.5 M25.4,17.5 L25.4,25 L26.9,34.5" fill="none" stroke="#a9a9ab" stroke-width="2.8" stroke-linecap="round" stroke-linejoin="round"/></svg>
<svg style="position:absolute;left:4236px;top:143px;" width="50" height="46" viewBox="0 0 50 46"><g stroke="#3b82f6" stroke-width="2.6" stroke-linecap="butt"><line x1="5.3" y1="6.8" x2="45.5" y2="6.8"/><line x1="5.3" y1="22.2" x2="45.5" y2="22.2"/><line x1="5.3" y1="37.8" x2="45.5" y2="37.8"/></g><g fill="#3b82f6"><circle cx="35" cy="6.8" r="4.4"/><circle cx="12.9" cy="22.2" r="4.4"/><circle cx="35" cy="37.8" r="4.4"/></g></svg>
<div style="position:absolute;left:3695.00px;top:226.44px;font-family:'Liberation Sans', sans-serif;font-size:42px;line-height:42px;color:#9b9b9d;white-space:pre;font-weight:bold;letter-spacing:-0.798px;-webkit-text-stroke:0.25px #9b9b9d;">Title View</div>
<div style="position:absolute;left:3772.50px;top:315.37px;font-family:'Liberation Sans', sans-serif;font-size:35px;line-height:35px;color:#e2e2e3;white-space:pre;letter-spacing:-0.765px;-webkit-text-stroke:0.8px #e2e2e3;">Is Selected</div>
<div style="position:absolute;left:3972px;top:302px;width:445px;height:63px;background:#3a3a3c;border-radius:9px;box-shadow:inset 0 0 0 1.5px #4b4b4d;"></div>
<div style="position:absolute;left:4099.00px;top:314.52px;font-family:'Liberation Sans', sans-serif;font-size:36px;line-height:36px;color:#cfcfd0;white-space:pre;letter-spacing:0.489px;-webkit-text-stroke:0.8px #cfcfd0;">$isSelected</div>
<div style="position:absolute;left:3664px;top:415px;width:764px;height:2px;background:#38383a;"></div>
<div style="position:absolute;left:3984.00px;top:444.29px;font-family:'Liberation Sans', sans-serif;font-size:41px;line-height:41px;color:#9b9b9d;white-space:pre;font-weight:bold;letter-spacing:-0.778px;-webkit-text-stroke:0.25px #9b9b9d;">Modifiers</div>
<div style="position:absolute;left:3664px;top:510px;width:764px;height:2px;background:#38383a;"></div>
<div style="position:absolute;left:3695.00px;top:532.79px;font-family:'Liberation Sans', sans-serif;font-size:41px;line-height:41px;color:#9b9b9d;white-space:pre;font-weight:bold;letter-spacing:-0.889px;-webkit-text-stroke:0.25px #9b9b9d;">Accessibility</div>
<div style="position:absolute;left:3857.50px;top:620.37px;font-family:'Liberation Sans', sans-serif;font-size:35px;line-height:35px;color:#e2e2e3;white-space:pre;letter-spacing:-1.282px;-webkit-text-stroke:0.8px #e2e2e3;">Label</div>
<div style="position:absolute;left:3975px;top:614px;width:441px;height:51px;background:#2c2c2e;box-shadow:inset 0 0 0 1.5px #454547;"></div>
<div style="position:absolute;left:3985.00px;top:619.52px;font-family:'Liberation Sans', sans-serif;font-size:36px;line-height:36px;color:#6d6d70;white-space:pre;letter-spacing:0.489px;-webkit-text-stroke:0.8px #6d6d70;">Inherited</div>
<div style="position:absolute;left:3804.00px;top:691.87px;font-family:'Liberation Sans', sans-serif;font-size:35px;line-height:35px;color:#e2e2e3;white-space:pre;letter-spacing:-0.026px;-webkit-text-stroke:0.8px #e2e2e3;">Identifier</div>
<div style="position:absolute;left:3975px;top:686px;width:441px;height:51px;background:#2c2c2e;box-shadow:inset 0 0 0 1.5px #454547;"></div>
<div style="position:absolute;left:3985.00px;top:691.02px;font-family:'Liberation Sans', sans-serif;font-size:36px;line-height:36px;color:#6d6d70;white-space:pre;letter-spacing:0.489px;-webkit-text-stroke:0.8px #6d6d70;">Inherited</div>
<div style="position:absolute;left:3664px;top:790px;width:764px;height:2px;background:#38383a;"></div>
<div style="position:absolute;left:3695.00px;top:813.63px;font-family:'Liberation Sans', sans-serif;font-size:40px;line-height:40px;color:#9b9b9d;white-space:pre;font-weight:bold;letter-spacing:-0.877px;-webkit-text-stroke:0.25px #9b9b9d;">Padding</div>
<svg style="position:absolute;left:3984px;top:900px;" width="422" height="180" viewBox="0 0 422 180"><g fill="none" stroke="#5c5c5e" stroke-width="2.6"><path d="M8.5,57.5 L8.5,20 Q8.5,10 18.5,10 L178.5,10"/><path d="M243.5,10 L403.5,10 Q413.5,10 413.5,20 L413.5,57.5"/><path d="M8.5,122.5 L8.5,161 Q8.5,171 18.5,171 L178.5,171"/><path d="M243.5,171 L403.5,171 Q413.5,171 413.5,161 L413.5,122.5"/></g></svg>
<div style="position:absolute;left:4176px;top:888px;width:38px;height:38px;background:linear-gradient(180deg,#5e5e60,#49494b);border-radius:7px;box-shadow:inset 0 0 0 1px #6a6a6c;"></div>
<div style="position:absolute;left:4176px;top:1054px;width:38px;height:38px;background:linear-gradient(180deg,#5e5e60,#49494b);border-radius:7px;box-shadow:inset 0 0 0 1px #6a6a6c;"></div>
<div style="position:absolute;left:3971px;top:971px;width:38px;height:38px;background:linear-gradient(180deg,#5e5e60,#49494b);border-radius:7px;box-shadow:inset 0 0 0 1px #6a6a6c;"></div>
<div style="position:absolute;left:4381px;top:971px;width:38px;height:38px;background:linear-gradient(180deg,#5e5e60,#49494b);border-radius:7px;box-shadow:inset 0 0 0 1px #6a6a6c;"></div>
<div style="position:absolute;left:4047px;top:967px;width:295px;height:49px;background:#2f2f31;border-radius:9px;box-shadow:inset 0 0 0 1.5px #464648;"></div>
<div style="position:absolute;left:4065px;top:990px;width:14px;height:2.5px;background:#b5b5b7;"></div>
<div style="position:absolute;left:4122.50px;top:971.52px;font-family:'Liberation Sans', sans-serif;font-size:36px;line-height:36px;color:#6d6d70;white-space:pre;letter-spacing:0.489px;-webkit-text-stroke:0.8px #6d6d70;">Inherited</div>
<svg style="position:absolute;left:4308px;top:980px;" width="22" height="22" viewBox="0 0 22 22"><g stroke="#c5c5c7" stroke-width="2.4"><line x1="11" y1="2" x2="11" y2="20"/><line x1="2" y1="11" x2="20" y2="11"/></g></svg>
<div style="position:absolute;left:3816.00px;top:972.87px;font-family:'Liberation Sans', sans-serif;font-size:35px;line-height:35px;color:#e2e2e3;white-space:pre;letter-spacing:-1.240px;-webkit-text-stroke:0.8px #e2e2e3;">Padding</div>
<div style="position:absolute;left:3664px;top:1143px;width:764px;height:2px;background:#38383a;"></div>
<div style="position:absolute;left:3695.00px;top:1166.13px;font-family:'Liberation Sans', sans-serif;font-size:40px;line-height:40px;color:#9b9b9d;white-space:pre;font-weight:bold;letter-spacing:-0.639px;-webkit-text-stroke:0.25px #9b9b9d;">Frame</div>
<div style="position:absolute;left:3876.00px;top:1252.87px;font-family:'Liberation Sans', sans-serif;font-size:35px;line-height:35px;color:#e2e2e3;white-space:pre;letter-spacing:-2.029px;-webkit-text-stroke:0.8px #e2e2e3;">Size</div>
<div style="position:absolute;left:3975px;top:1248px;width:202px;height:49px;background:#2f2f31;border-radius:9px;box-shadow:inset 0 0 0 1.5px #464648;"></div>
<div style="position:absolute;left:3992px;top:1271px;width:18px;height:2.5px;background:#b5b5b7;"></div>
<div style="position:absolute;left:4035.00px;top:1252.52px;font-family:'Liberation Sans', sans-serif;font-size:36px;line-height:36px;color:#6d6d70;white-space:pre;letter-spacing:0.113px;-webkit-text-stroke:0.8px #6d6d70;">Inher</div>
<svg style="position:absolute;left:4141px;top:1261px;" width="22" height="22" viewBox="0 0 22 22"><g stroke="#c5c5c7" stroke-width="2.4"><line x1="11" y1="2" x2="11" y2="20"/><line x1="2" y1="11" x2="20" y2="11"/></g></svg>
<div style="position:absolute;left:4212px;top:1248px;width:204px;height:49px;background:#2f2f31;border-radius:9px;box-shadow:inset 0 0 0 1.5px #464648;"></div>
<div style="position:absolute;left:4229px;top:1271px;width:18px;height:2.5px;background:#b5b5b7;"></div>
<div style="position:absolute;left:4272.00px;top:1252.52px;font-family:'Liberation Sans', sans-serif;font-size:36px;line-height:36px;color:#6d6d70;white-space:pre;letter-spacing:0.113px;-webkit-text-stroke:0.8px #6d6d70;">Inher</div>
<svg style="position:absolute;left:4378px;top:1261px;" width="22" height="22" viewBox="0 0 22 22"><g stroke="#c5c5c7" stroke-width="2.4"><line x1="11" y1="2" x2="11" y2="20"/><line x1="2" y1="11" x2="20" y2="11"/></g></svg>
<div style="position:absolute;left:4037.25px;top:1304.60px;font-family:'Liberation Sans', sans-serif;font-size:30px;line-height:30px;color:#c9c9cb;white-space:pre;letter-spacing:0.204px;-webkit-text-stroke:0.8px #c9c9cb;">Width</div>
<div style="position:absolute;left:4268.75px;top:1304.60px;font-family:'Liberation Sans', sans-serif;font-size:30px;line-height:30px;color:#c9c9cb;white-space:pre;letter-spacing:0.357px;-webkit-text-stroke:0.8px #c9c9cb;">Height</div>
<div style="position:absolute;left:3664px;top:1386px;width:764px;height:2px;background:#38383a;"></div>
<div style="position:absolute;left:3716px;top:1446px;width:724px;height:53px;background:#2c2c2e;box-shadow:inset 0 0 0 1.5px #454547;"></div>
<div style="position:absolute;left:3727.00px;top:1453.83px;font-family:'Liberation Sans', sans-serif;font-size:38px;line-height:38px;color:#6d6d70;white-space:pre;letter-spacing:1.108px;-webkit-text-stroke:0.8px #6d6d70;">Add Modifier</div>
<svg style="position:absolute;left:4226.0px;top:2413.0px;overflow:visible" width="143.2" height="18" viewBox="0 0 795.6 100"><g fill="none" stroke="#5e5e60" stroke-width="7" stroke-linecap="round" stroke-linejoin="round"><path transform="translate(0.0,0)" d="M30,8 L10,20 M4,40 L40,40 M22,20 L22,96 M22,50 L6,80 M24,50 L38,70 M50,10 L90,26 M90,10 L50,26 M46,40 L96,40 M66,40 L50,70 M56,62 L90,62 L90,90 M72,54 L72,96 M56,62 L56,90"/><path transform="translate(99.4,0)" d="M20,40 L80,40 M50,10 L50,92 M8,92 L92,92"/><path transform="translate(198.9,0)" d="M4,34 L36,34 M22,6 L22,88 Q22,96 12,92 M4,70 L38,56 M44,10 L90,10 L90,30 L44,30 M44,10 Q44,70 34,96 M66,36 L66,92 M52,50 L52,90 L84,90 L84,50"/><path transform="translate(298.3,0)" d="M50,4 L8,46 M50,4 L92,46 M28,50 L72,50 M20,68 L80,68 M50,50 L50,92 M32,76 L38,86 M70,76 L62,86 M8,94 L92,94"/><path transform="translate(397.8,0)" d="M4,34 L36,34 M22,6 L22,88 Q22,96 12,92 M4,70 L38,56 M44,26 L94,26 M68,6 L68,44 M50,48 L86,48 Q70,82 44,96 M56,58 Q72,84 96,94"/><path transform="translate(497.2,0)" d="M8,34 L92,34 M50,6 L50,96 M48,40 Q34,72 8,86 M52,40 Q66,70 92,86 M68,14 L78,24"/><path transform="translate(596.7,0)" d="M18,6 L26,16 M6,30 L34,30 Q26,54 4,70 M22,48 L22,96 M24,54 L36,66 M44,38 L92,38 M68,8 L68,90 M40,92 L96,92"/><path transform="translate(696.1,0)" d="M90,10 L12,10 L12,92 L92,92 M28,28 Q60,56 80,80 M76,26 Q50,62 26,80"/></g></svg>
<div style="position:absolute;left:4209.00px;top:2414.76px;font-family:'Liberation Sans', sans-serif;font-size:18px;line-height:18px;color:#5e5e60;white-space:pre;letter-spacing:0.000px;-webkit-text-stroke:0.8px #5e5e60;">@</div>
<div style="position:absolute;left:2591px;top:402px;width:795px;height:80px;background:#2c3240;border-radius:15px;box-shadow:0 2px 10px rgba(0,0,0,0.25), inset 0 0 0 1px rgba(255,255,255,0.05);"></div>
<div style="position:absolute;left:2611px;top:424px;width:37px;height:37px;border-radius:50%;background:#5fd25c;"></div>
<div style="position:absolute;left:2660.00px;top:424.52px;font-family:'Liberation Sans', sans-serif;font-size:36px;line-height:36px;color:#eaeaeb;white-space:pre;letter-spacing:-0.006px;-webkit-text-stroke:0.8px #eaeaeb;">Preview</div>
<div style="position:absolute;left:2823px;top:416px;width:2px;height:52px;background:#3d4350;"></div>
<div style="position:absolute;left:2936px;top:416px;width:2px;height:52px;background:#3d4350;"></div>
<div style="position:absolute;left:3050px;top:416px;width:2px;height:52px;background:#3d4350;"></div>
<div style="position:absolute;left:3163px;top:416px;width:2px;height:52px;background:#3d4350;"></div>
<div style="position:absolute;left:3277px;top:416px;width:2px;height:52px;background:#3d4350;"></div>
<div style="position:absolute;left:2860px;top:422px;width:40px;height:40px;border-radius:50%;background:#2f7cf6;"></div>
<div style="position:absolute;left:2870.5px;top:432.5px;width:19.0px;height:19.0px;background:#26436c;border-radius:4px;"></div>
<svg style="position:absolute;left:2973px;top:421px;" width="44" height="44" viewBox="0 0 44 44"><circle cx="22" cy="22" r="19" fill="none" stroke="#a6a9b0" stroke-width="2.4"/><rect x="14" y="10" width="16" height="21" rx="8" fill="none" stroke="#a6a9b0" stroke-width="2.4"/><line x1="22" y1="31" x2="22" y2="41" stroke="#a6a9b0" stroke-width="2.4"/></svg>
<svg style="position:absolute;left:3084px;top:417px;" width="44" height="48" viewBox="0 0 44 48"><rect x="12" y="18" width="26" height="26" fill="none" stroke="#a6a9b0" stroke-width="2.4"/><path d="M4,22 L4,12 Q4,6 10,6 L16,6 M12,1 L17,6 L12,11" fill="none" stroke="#a6a9b0" stroke-width="2.4" stroke-linejoin="round" stroke-linecap="round"/></svg>
<svg style="position:absolute;left:3198px;top:421px;" width="46" height="44" viewBox="0 0 46 44"><rect x="4" y="3" width="38" height="27" rx="4" fill="none" stroke="#a6a9b0" stroke-width="2.4"/><line x1="2" y1="37" x2="44" y2="37" stroke="#a6a9b0" stroke-width="2.4"/><circle cx="28" cy="37" r="4" fill="#2c3240" stroke="#a6a9b0" stroke-width="2.4"/></svg>
<svg style="position:absolute;left:3311px;top:421px;" width="46" height="46" viewBox="0 0 46 46"><rect x="3" y="3" width="26" height="26" rx="3" fill="none" stroke="#a6a9b0" stroke-width="2.4"/><rect x="15" y="15" width="26" height="26" rx="3" fill="#2c3240" stroke="#a6a9b0" stroke-width="2.4"/><g stroke="#a6a9b0" stroke-width="2.4"><line x1="28" y1="21" x2="28" y2="35"/><line x1="21" y1="28" x2="35" y2="28"/></g></svg>
<div style="position:absolute;left:0;top:0;width:3660px;height:2316px;overflow:hidden">
<div style="position:absolute;left:3542px;top:1029px;width:9px;height:240px;border-radius:0 4px 4px 0;background:#1c1c1e;box-shadow:inset -1px 0 0 #3a3a3c;"></div>
<div style="position:absolute;left:2424px;top:826px;width:11px;height:76px;border-radius:4px 0 0 4px;background:#1c1c1e;box-shadow:inset 1px 0 0 #3a3a3c;"></div>
<div style="position:absolute;left:2424px;top:974px;width:11px;height:145px;border-radius:4px 0 0 4px;background:#1c1c1e;box-shadow:inset 1px 0 0 #3a3a3c;"></div>
<div style="position:absolute;left:2424px;top:1166px;width:11px;height:145px;border-radius:4px 0 0 4px;background:#1c1c1e;box-shadow:inset 1px 0 0 #3a3a3c;"></div>
<div style="position:absolute;left:2433px;top:517px;width:1109px;height:2200px;border-radius:166px;background:#171717;box-shadow:inset 0 0 0 2px #2b2b2c, inset 0 0 0 18px #202020;"></div>
<div style="position:absolute;left:2466px;top:549px;width:1043px;height:2100px;border-radius:133px;background:#000;"></div>
<div style="position:absolute;left:2499.5px;top:580px;width:977.5px;height:2000px;border-radius:100px;background:#fff;"></div>
<svg style="position:absolute;left:2700px;top:578px;" width="576" height="84" viewBox="0 0 576 84"><path d="M0,0 L14,0 Q14.5,0 14.5,12 Q16,80 74,81 L502,81 Q560,80 561.5,12 Q561.5,0 562,0 L576,0 L576,2 Z" fill="#000"/><path d="M0,0 Q14.5,0 14.5,14 Q16,81 74,81.5 L502,81.5 Q560,81 561.5,14 Q561.5,0 576,0 Z" fill="#000"/></svg>
<div style="position:absolute;left:2631px;top:517px;width:15px;height:15px;background:#161617;"></div>
<div style="position:absolute;left:3328px;top:517px;width:15px;height:15px;background:#161617;"></div>
<div style="position:absolute;left:2433px;top:715px;width:15px;height:16px;background:#161617;"></div>
<div style="position:absolute;left:3527px;top:715px;width:15px;height:16px;background:#161617;"></div>
<svg style="position:absolute;left:2812px;top:1391px;" width="354" height="354" viewBox="0 0 354 354"><circle cx="177" cy="177" r="176.5" fill="#84b438"/><path d="M108,186 L157,246 L243,113" fill="none" stroke="#fff" stroke-width="33" stroke-linecap="round" stroke-linejoin="round"/></svg>
<svg style="position:absolute;left:2925.0px;top:1862.0px;overflow:visible" width="118.5" height="40" viewBox="0 0 296.2 100"><g fill="none" stroke="#000" stroke-width="11" stroke-linecap="round" stroke-linejoin="round"><path transform="translate(0.0,0)" d="M16,14 L80,14 L80,48 L22,48 M22,30 L22,80 Q22,92 36,92 L86,92 L88,76"/><path transform="translate(98.8,0)" d="M12,16 L88,16 M8,48 L92,48 M36,16 Q36,74 14,96 M66,16 L66,96"/><path transform="translate(197.5,0)" d="M48,2 L56,12 M20,18 L82,18 L82,40 L20,40 M20,18 Q22,70 6,96 M34,56 L84,56 L84,92 L34,92 Z"/></g></svg>
</div>
<svg style="position:absolute;left:2345px;top:2334px;" width="50" height="50" viewBox="0 0 50 50"><g fill="none" stroke="#c0c0c2" stroke-width="2.4" stroke-linejoin="round" stroke-linecap="round"><path d="M30,3 L46,19 L40,21 L31,30 Q36,40 28,44 L6,22 Q10,14 20,19 L29,10 Z"/><line x1="17" y1="33" x2="3" y2="47"/></g></svg>
<svg style="position:absolute;left:2439px;top:2337px;" width="46" height="46" viewBox="0 0 46 46"><g stroke="#c0c0c2" stroke-width="2.4"><line x1="2" y1="7" x2="44" y2="7"/><line x1="2" y1="23" x2="44" y2="23"/><line x1="2" y1="39" x2="44" y2="39"/></g><g fill="#3d3d3d" stroke="#c0c0c2" stroke-width="2.4"><circle cx="31" cy="7" r="4.5"/><circle cx="12" cy="23" r="4.5"/><circle cx="31" cy="39" r="4.5"/></g></svg>
<svg style="position:absolute;left:3317px;top:2333px;" width="50" height="50" viewBox="0 0 50 50"><g fill="none" stroke="#c9c9cb" stroke-width="2.6" stroke-linecap="round"><circle cx="20" cy="20" r="16.5"/><line x1="32" y1="32" x2="46" y2="46" stroke-width="3.4"/><line x1="12" y1="20" x2="28" y2="20"/></g></svg>
<div style="position:absolute;left:3402.00px;top:2338.94px;font-family:'Liberation Sans', sans-serif;font-size:42px;line-height:42px;color:#f4f4f5;white-space:pre;letter-spacing:-0.530px;-webkit-text-stroke:0.8px #f4f4f5;">75%</div>
<svg style="position:absolute;left:3525px;top:2350px;" width="28" height="22" viewBox="0 0 28 22"><path d="M3,5 L14,16 L25,5" fill="none" stroke="#eeeeef" stroke-width="3.6" stroke-linecap="round" stroke-linejoin="round"/></svg>
<svg style="position:absolute;left:3579px;top:2333px;" width="50" height="50" viewBox="0 0 50 50"><g fill="none" stroke="#c9c9cb" stroke-width="2.6" stroke-linecap="round"><circle cx="20" cy="20" r="16.5"/><line x1="32" y1="32" x2="46" y2="46" stroke-width="3.4"/><line x1="12" y1="20" x2="28" y2="20"/><line x1="20" y1="12" x2="20" y2="28"/></g></svg>
<svg style="position:absolute;left:840px;top:2432px;" width="50" height="34" viewBox="0 0 50 34"><path d="M2,7 Q2,2 7,2 L38,2 L48,17 L38,32 L7,32 Q2,32 2,27 Z" fill="#3478f6"/></svg>
<div style="position:absolute;left:3290.00px;top:2429.83px;font-family:'Liberation Sans', sans-serif;font-size:38px;line-height:38px;color:#9c9c9e;white-space:pre;font-weight:bold;letter-spacing:-1.088px;-webkit-text-stroke:0.25px #9c9c9e;">35 characters</div>
<div style="position:absolute;left:3549px;top:2427px;width:2px;height:44px;background:#3e3e40;"></div>
<svg style="position:absolute;left:3578px;top:2428px;" width="44" height="44" viewBox="0 0 44 44"><rect x="3" y="3" width="38" height="38" rx="7" fill="none" stroke="#9c9c9e" stroke-width="2.6"/><rect x="8" y="27" width="28" height="9" rx="2" fill="#9c9c9e"/></svg>
<svg style="position:absolute;left:2088px;top:299px;" width="224" height="560" viewBox="0 0 224 560"><rect x="44.0" y="0.3" width="6.6" height="6" fill="#7f8c98" fill-opacity="0.38"/><rect x="44.0" y="9.7" width="69.3" height="6" fill="#7f8c98" fill-opacity="0.38"/><rect x="44.0" y="19.2" width="52.8" height="6" fill="#7f8c98" fill-opacity="0.38"/><rect x="44.0" y="28.6" width="6.6" height="6" fill="#7f8c98" fill-opacity="0.38"/><rect x="44.0" y="38.1" width="128.7" height="6" fill="#7f8c98" fill-opacity="0.38"/><rect x="44.0" y="47.5" width="6.6" height="6" fill="#7f8c98" fill-opacity="0.38"/><rect x="44.0" y="66.4" width="19.8" height="6" fill="#ff7ab2" fill-opacity="0.55"/><rect x="67.1" y="66.4" width="23.1" height="6" fill="#dfdfe0" fill-opacity="0.5"/><rect x="44.0" y="85.3" width="19.8" height="6" fill="#ff7ab2" fill-opacity="0.55"/><rect x="67.1" y="85.3" width="36.3" height="6" fill="#6bdfff" fill-opacity="0.55"/><rect x="103.4" y="85.3" width="3.3" height="6" fill="#dfdfe0" fill-opacity="0.5"/><rect x="110.0" y="85.3" width="13.2" height="6" fill="#dabaff" fill-opacity="0.55"/><rect x="126.5" y="85.3" width="3.3" height="6" fill="#dfdfe0" fill-opacity="0.5"/><rect x="57.2" y="94.7" width="6.6" height="6" fill="#7f8c98" fill-opacity="0.38"/><rect x="67.1" y="94.7" width="21.1" height="6" fill="#7f8c98" fill-opacity="0.55"/><rect x="57.2" y="104.1" width="19.8" height="6" fill="#dabaff" fill-opacity="0.55"/><rect x="80.3" y="104.1" width="9.9" height="6" fill="#ff7ab2" fill-opacity="0.55"/><rect x="93.5" y="104.1" width="33.0" height="6" fill="#4eb0cc" fill-opacity="0.55"/><rect x="129.8" y="104.1" width="3.3" height="6" fill="#dfdfe0" fill-opacity="0.5"/><rect x="136.4" y="104.1" width="16.5" height="6" fill="#ff7ab2" fill-opacity="0.55"/><rect x="57.2" y="123.0" width="9.9" height="6" fill="#ff7ab2" fill-opacity="0.55"/><rect x="70.4" y="123.0" width="13.2" height="6" fill="#4eb0cc" fill-opacity="0.55"/><rect x="83.6" y="123.0" width="3.3" height="6" fill="#dfdfe0" fill-opacity="0.5"/><rect x="90.2" y="123.0" width="13.2" height="6" fill="#ff7ab2" fill-opacity="0.55"/><rect x="106.7" y="123.0" width="13.2" height="6" fill="#dabaff" fill-opacity="0.55"/><rect x="123.2" y="123.0" width="3.3" height="6" fill="#dfdfe0" fill-opacity="0.5"/><rect x="70.4" y="132.5" width="19.8" height="6" fill="#dabaff" fill-opacity="0.55"/><rect x="93.5" y="132.5" width="3.3" height="6" fill="#dfdfe0" fill-opacity="0.5"/><rect x="83.6" y="141.9" width="19.8" height="6" fill="#dabaff" fill-opacity="0.55"/><rect x="103.4" y="141.9" width="3.3" height="6" fill="#dfdfe0" fill-opacity="0.5"/><rect x="106.7" y="141.9" width="19.8" height="6" fill="#acf2e4" fill-opacity="0.55"/><rect x="126.5" y="141.9" width="3.3" height="6" fill="#dfdfe0" fill-opacity="0.5"/><rect x="133.1" y="141.9" width="3.3" height="6" fill="#dfdfe0" fill-opacity="0.5"/><rect x="96.8" y="151.3" width="13.2" height="6" fill="#ff7ab2" fill-opacity="0.55"/><rect x="110.0" y="151.3" width="3.3" height="6" fill="#dfdfe0" fill-opacity="0.5"/><rect x="113.3" y="151.3" width="33.0" height="6" fill="#78c2b3" fill-opacity="0.55"/><rect x="146.3" y="151.3" width="3.3" height="6" fill="#dfdfe0" fill-opacity="0.5"/><rect x="149.6" y="151.3" width="19.8" height="6" fill="#b281eb" fill-opacity="0.55"/><rect x="169.4" y="151.3" width="6.6" height="6" fill="#dfdfe0" fill-opacity="0.5"/><rect x="83.6" y="160.8" width="6.6" height="6" fill="#dfdfe0" fill-opacity="0.5"/><rect x="93.5" y="160.8" width="3.3" height="6" fill="#dfdfe0" fill-opacity="0.5"/><rect x="96.8" y="170.2" width="16.5" height="6" fill="#dabaff" fill-opacity="0.55"/><rect x="113.3" y="170.2" width="3.3" height="6" fill="#dfdfe0" fill-opacity="0.5"/><rect x="116.6" y="170.2" width="33.0" height="6" fill="#acf2e4" fill-opacity="0.55"/><rect x="149.6" y="170.2" width="3.3" height="6" fill="#dfdfe0" fill-opacity="0.5"/><rect x="156.2" y="170.2" width="33.0" height="6" fill="#78c2b3" fill-opacity="0.55"/><rect x="110.0" y="179.7" width="3.3" height="6" fill="#dfdfe0" fill-opacity="0.5"/><rect x="116.6" y="179.7" width="75.9" height="6" fill="#ff8170" fill-opacity="0.55"/><rect x="110.0" y="189.1" width="3.3" height="6" fill="#dfdfe0" fill-opacity="0.5"/><rect x="116.6" y="189.1" width="26.4" height="6" fill="#ff8170" fill-opacity="0.55"/><rect x="143.0" y="189.1" width="3.3" height="6" fill="#dfdfe0" fill-opacity="0.5"/><rect x="110.0" y="198.5" width="3.3" height="6" fill="#dfdfe0" fill-opacity="0.5"/><rect x="113.3" y="198.5" width="13.2" height="6" fill="#b281eb" fill-opacity="0.55"/><rect x="126.5" y="198.5" width="6.6" height="6" fill="#dfdfe0" fill-opacity="0.5"/><rect x="133.1" y="198.5" width="19.8" height="6" fill="#b281eb" fill-opacity="0.55"/><rect x="152.9" y="198.5" width="3.3" height="6" fill="#dfdfe0" fill-opacity="0.5"/><rect x="156.2" y="198.5" width="13.2" height="6" fill="#b281eb" fill-opacity="0.55"/><rect x="169.4" y="198.5" width="3.3" height="6" fill="#dfdfe0" fill-opacity="0.5"/><rect x="176.0" y="198.5" width="9.9" height="6" fill="#d9c97c" fill-opacity="0.55"/><rect x="185.9" y="198.5" width="6.6" height="6" fill="#dfdfe0" fill-opacity="0.5"/><rect x="110.0" y="208.0" width="3.3" height="6" fill="#dfdfe0" fill-opacity="0.5"/><rect x="113.3" y="208.0" width="49.5" height="6" fill="#b281eb" fill-opacity="0.55"/><rect x="123.2" y="217.4" width="3.3" height="6" fill="#dfdfe0" fill-opacity="0.5"/><rect x="126.5" y="217.4" width="33.0" height="6" fill="#78c2b3" fill-opacity="0.55"/><rect x="162.8" y="217.4" width="3.3" height="6" fill="#dfdfe0" fill-opacity="0.5"/><rect x="123.2" y="226.9" width="16.5" height="6" fill="#dabaff" fill-opacity="0.55"/><rect x="139.7" y="226.9" width="3.3" height="6" fill="#dfdfe0" fill-opacity="0.5"/><rect x="143.0" y="226.9" width="9.9" height="6" fill="#acf2e4" fill-opacity="0.55"/><rect x="152.9" y="226.9" width="3.3" height="6" fill="#dfdfe0" fill-opacity="0.5"/><rect x="159.5" y="226.9" width="9.9" height="6" fill="#d9c97c" fill-opacity="0.55"/><rect x="172.7" y="226.9" width="3.3" height="6" fill="#dfdfe0" fill-opacity="0.5"/><rect x="179.3" y="226.9" width="9.9" height="6" fill="#d9c97c" fill-opacity="0.55"/><rect x="189.2" y="226.9" width="3.3" height="6" fill="#dfdfe0" fill-opacity="0.5"/><rect x="123.2" y="236.3" width="16.5" height="6" fill="#acf2e4" fill-opacity="0.55"/><rect x="139.7" y="236.3" width="3.3" height="6" fill="#dfdfe0" fill-opacity="0.5"/><rect x="146.3" y="236.3" width="9.9" height="6" fill="#d9c97c" fill-opacity="0.55"/><rect x="159.5" y="236.3" width="3.3" height="6" fill="#dfdfe0" fill-opacity="0.5"/><rect x="166.1" y="236.3" width="9.9" height="6" fill="#d9c97c" fill-opacity="0.55"/><rect x="176.0" y="236.3" width="3.3" height="6" fill="#dfdfe0" fill-opacity="0.5"/><rect x="123.2" y="245.7" width="13.2" height="6" fill="#acf2e4" fill-opacity="0.55"/><rect x="136.4" y="245.7" width="3.3" height="6" fill="#dfdfe0" fill-opacity="0.5"/><rect x="143.0" y="245.7" width="3.3" height="6" fill="#d9c97c" fill-opacity="0.55"/><rect x="149.6" y="245.7" width="3.3" height="6" fill="#dfdfe0" fill-opacity="0.5"/><rect x="156.2" y="245.7" width="9.9" height="6" fill="#d9c97c" fill-opacity="0.55"/><rect x="166.1" y="245.7" width="3.3" height="6" fill="#dfdfe0" fill-opacity="0.5"/><rect x="172.7" y="245.7" width="3.3" height="6" fill="#dfdfe0" fill-opacity="0.5"/><rect x="123.2" y="255.2" width="16.5" height="6" fill="#dabaff" fill-opacity="0.55"/><rect x="139.7" y="255.2" width="3.3" height="6" fill="#dfdfe0" fill-opacity="0.5"/><rect x="143.0" y="255.2" width="9.9" height="6" fill="#acf2e4" fill-opacity="0.55"/><rect x="152.9" y="255.2" width="3.3" height="6" fill="#dfdfe0" fill-opacity="0.5"/><rect x="159.5" y="255.2" width="9.9" height="6" fill="#d9c97c" fill-opacity="0.55"/><rect x="172.7" y="255.2" width="3.3" height="6" fill="#dfdfe0" fill-opacity="0.5"/><rect x="179.3" y="255.2" width="9.9" height="6" fill="#d9c97c" fill-opacity="0.55"/><rect x="189.2" y="255.2" width="3.3" height="6" fill="#dfdfe0" fill-opacity="0.5"/><rect x="123.2" y="264.6" width="16.5" height="6" fill="#acf2e4" fill-opacity="0.55"/><rect x="139.7" y="264.6" width="3.3" height="6" fill="#dfdfe0" fill-opacity="0.5"/><rect x="146.3" y="264.6" width="9.9" height="6" fill="#d9c97c" fill-opacity="0.55"/><rect x="159.5" y="264.6" width="3.3" height="6" fill="#dfdfe0" fill-opacity="0.5"/><rect x="166.1" y="264.6" width="9.9" height="6" fill="#d9c97c" fill-opacity="0.55"/><rect x="176.0" y="264.6" width="3.3" height="6" fill="#dfdfe0" fill-opacity="0.5"/><rect x="123.2" y="274.1" width="13.2" height="6" fill="#acf2e4" fill-opacity="0.55"/><rect x="136.4" y="274.1" width="3.3" height="6" fill="#dfdfe0" fill-opacity="0.5"/><rect x="143.0" y="274.1" width="9.9" height="6" fill="#d9c97c" fill-opacity="0.55"/><rect x="156.2" y="274.1" width="3.3" height="6" fill="#dfdfe0" fill-opacity="0.5"/><rect x="162.8" y="274.1" width="9.9" height="6" fill="#d9c97c" fill-opacity="0.55"/><rect x="172.7" y="274.1" width="6.6" height="6" fill="#dfdfe0" fill-opacity="0.5"/><rect x="83.6" y="283.5" width="3.3" height="6" fill="#dfdfe0" fill-opacity="0.5"/><rect x="83.6" y="292.9" width="29.7" height="6" fill="#acf2e4" fill-opacity="0.55"/><rect x="113.3" y="292.9" width="3.3" height="6" fill="#dfdfe0" fill-opacity="0.5"/><rect x="116.6" y="292.9" width="33.0" height="6" fill="#acf2e4" fill-opacity="0.55"/><rect x="149.6" y="292.9" width="3.3" height="6" fill="#dfdfe0" fill-opacity="0.5"/><rect x="156.2" y="292.9" width="36.3" height="6" fill="#78c2b3" fill-opacity="0.55"/><rect x="192.5" y="292.9" width="3.3" height="6" fill="#dfdfe0" fill-opacity="0.5"/><rect x="70.4" y="302.4" width="3.3" height="6" fill="#dfdfe0" fill-opacity="0.5"/><rect x="57.2" y="311.8" width="3.3" height="6" fill="#dfdfe0" fill-opacity="0.5"/><rect x="44.0" y="321.3" width="3.3" height="6" fill="#dfdfe0" fill-opacity="0.5"/><rect x="44.0" y="340.1" width="19.8" height="6" fill="#ff7ab2" fill-opacity="0.55"/><rect x="67.1" y="340.1" width="66.0" height="6" fill="#6bdfff" fill-opacity="0.55"/><rect x="133.1" y="340.1" width="3.3" height="6" fill="#dfdfe0" fill-opacity="0.5"/><rect x="139.7" y="340.1" width="49.5" height="6" fill="#dabaff" fill-opacity="0.55"/><rect x="192.5" y="340.1" width="3.3" height="6" fill="#dfdfe0" fill-opacity="0.5"/><rect x="57.2" y="349.6" width="19.8" height="6" fill="#ff7ab2" fill-opacity="0.55"/><rect x="80.3" y="349.6" width="9.9" height="6" fill="#ff7ab2" fill-opacity="0.55"/><rect x="93.5" y="349.6" width="26.4" height="6" fill="#4eb0cc" fill-opacity="0.55"/><rect x="119.9" y="349.6" width="3.3" height="6" fill="#dfdfe0" fill-opacity="0.5"/><rect x="126.5" y="349.6" width="13.2" height="6" fill="#ff7ab2" fill-opacity="0.55"/><rect x="143.0" y="349.6" width="13.2" height="6" fill="#dabaff" fill-opacity="0.55"/><rect x="159.5" y="349.6" width="3.3" height="6" fill="#dfdfe0" fill-opacity="0.5"/><rect x="70.4" y="359.0" width="36.3" height="6" fill="#acf2e4" fill-opacity="0.55"/><rect x="106.7" y="359.0" width="6.6" height="6" fill="#dfdfe0" fill-opacity="0.5"/><rect x="57.2" y="368.5" width="3.3" height="6" fill="#dfdfe0" fill-opacity="0.5"/><rect x="44.0" y="377.9" width="3.3" height="6" fill="#dfdfe0" fill-opacity="0.5"/><rect x="44.0" y="396.8" width="19.8" height="6" fill="#ff7ab2" fill-opacity="0.55"/><rect x="67.1" y="396.8" width="29.7" height="6" fill="#6bdfff" fill-opacity="0.55"/><rect x="96.8" y="396.8" width="3.3" height="6" fill="#dfdfe0" fill-opacity="0.5"/><rect x="103.4" y="396.8" width="13.2" height="6" fill="#dabaff" fill-opacity="0.55"/><rect x="119.9" y="396.8" width="3.3" height="6" fill="#dfdfe0" fill-opacity="0.5"/><rect x="57.2" y="415.7" width="6.6" height="6" fill="#7f8c98" fill-opacity="0.38"/><rect x="63.8" y="415.7" width="21.1" height="6" fill="#7f8c98" fill-opacity="0.55"/><rect x="57.2" y="425.1" width="26.4" height="6" fill="#dabaff" fill-opacity="0.55"/><rect x="86.9" y="425.1" width="9.9" height="6" fill="#ff7ab2" fill-opacity="0.55"/><rect x="100.1" y="425.1" width="33.0" height="6" fill="#4eb0cc" fill-opacity="0.55"/><rect x="133.1" y="425.1" width="3.3" height="6" fill="#dfdfe0" fill-opacity="0.5"/><rect x="139.7" y="425.1" width="13.2" height="6" fill="#dabaff" fill-opacity="0.55"/><rect x="57.2" y="444.0" width="9.9" height="6" fill="#ff7ab2" fill-opacity="0.55"/><rect x="70.4" y="444.0" width="13.2" height="6" fill="#4eb0cc" fill-opacity="0.55"/><rect x="83.6" y="444.0" width="3.3" height="6" fill="#dfdfe0" fill-opacity="0.5"/><rect x="90.2" y="444.0" width="13.2" height="6" fill="#ff7ab2" fill-opacity="0.55"/><rect x="106.7" y="444.0" width="13.2" height="6" fill="#dabaff" fill-opacity="0.55"/><rect x="123.2" y="444.0" width="3.3" height="6" fill="#dfdfe0" fill-opacity="0.5"/><rect x="70.4" y="453.4" width="13.2" height="6" fill="#dabaff" fill-opacity="0.55"/><rect x="83.6" y="453.4" width="36.3" height="6" fill="#78c2b3" fill-opacity="0.55"/><rect x="123.2" y="453.4" width="3.3" height="6" fill="#dfdfe0" fill-opacity="0.5"/><rect x="129.8" y="453.4" width="16.5" height="6" fill="#ff8170" fill-opacity="0.55"/><rect x="149.6" y="453.4" width="3.3" height="6" fill="#dfdfe0" fill-opacity="0.5"/><rect x="156.2" y="453.4" width="16.5" height="6" fill="#ff8170" fill-opacity="0.55"/><rect x="83.6" y="462.9" width="3.3" height="6" fill="#dfdfe0" fill-opacity="0.5"/><rect x="86.9" y="462.9" width="72.6" height="6" fill="#b281eb" fill-opacity="0.55"/><rect x="159.5" y="462.9" width="3.3" height="6" fill="#dfdfe0" fill-opacity="0.5"/><rect x="83.6" y="472.3" width="3.3" height="6" fill="#dfdfe0" fill-opacity="0.5"/><rect x="86.9" y="472.3" width="59.4" height="6" fill="#b281eb" fill-opacity="0.55"/><rect x="149.6" y="472.3" width="6.6" height="6" fill="#d9c97c" fill-opacity="0.55"/><rect x="156.2" y="472.3" width="3.3" height="6" fill="#dfdfe0" fill-opacity="0.5"/><rect x="83.6" y="481.7" width="3.3" height="6" fill="#dfdfe0" fill-opacity="0.5"/><rect x="86.9" y="481.7" width="23.1" height="6" fill="#b281eb" fill-opacity="0.55"/><rect x="110.0" y="481.7" width="6.6" height="6" fill="#dfdfe0" fill-opacity="0.5"/><rect x="57.2" y="491.2" width="3.3" height="6" fill="#dfdfe0" fill-opacity="0.5"/><rect x="44.0" y="500.6" width="3.3" height="6" fill="#dfdfe0" fill-opacity="0.5"/></svg>
</body></html>
